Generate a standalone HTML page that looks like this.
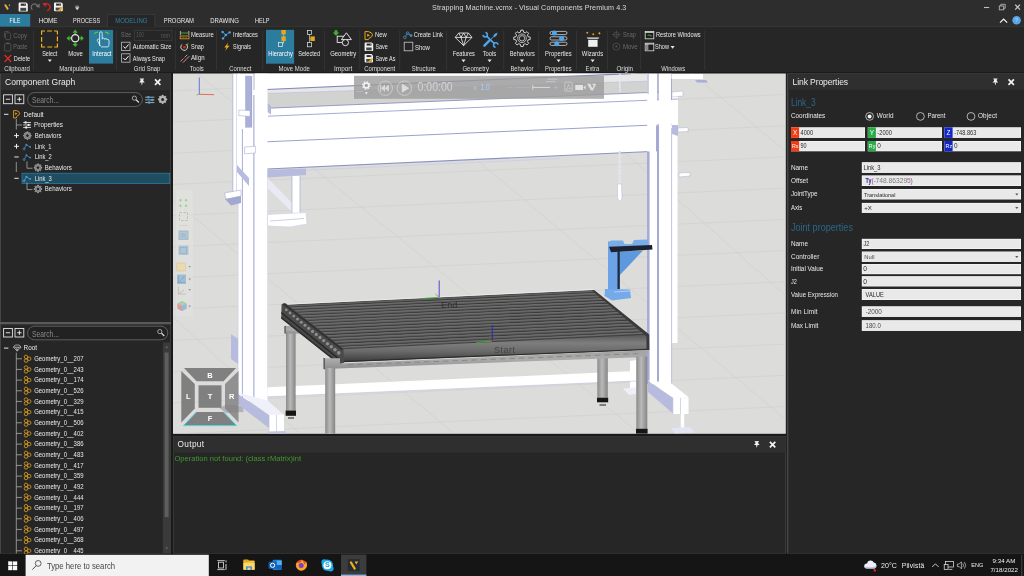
<!DOCTYPE html>
<html lang="en"><head><meta charset="utf-8"><title>Strapping Machine.vcmx - Visual Components Premium 4.3</title>
<style>
html,body{margin:0;padding:0;background:#262626;overflow:hidden;}
body{width:1024px;height:576px;position:relative;font-family:"Liberation Sans",sans-serif;}
#gfx{position:absolute;left:0;top:0;width:1024px;height:576px;display:block;}
#txt{position:absolute;left:0;top:0;width:1920px;height:1080px;transform-origin:0 0;transform:scale(0.533333);font-family:"Liberation Sans",sans-serif;}
.t{position:absolute;white-space:pre;line-height:20px;height:20px;font-size:12px;color:#e8e8e8;}
</style></head>
<body>
<svg id="gfx" viewBox="0 0 1024 576" width="1024" height="576">
<rect x="0" y="0" width="1024" height="576" fill="#1a1a1a" />
<rect x="0" y="0" width="1024" height="26.6" fill="#2d2d2d" />
<rect x="0" y="27.2" width="1024" height="44.8" fill="#262626" />
<rect x="0" y="26.4" width="1024" height="0.8" fill="#3e3e3e" />
<rect x="0" y="73.5" width="171" height="249.5" fill="#464646" />
<rect x="1" y="74" width="169.3" height="248.3" fill="#262626" />
<rect x="1" y="74" width="169.3" height="16" fill="#2f2f2f" />
<rect x="0" y="322" width="171" height="2" fill="#5a5a5a" />
<rect x="0" y="324" width="171" height="229.7" fill="#464646" />
<rect x="1" y="324.5" width="169.3" height="229.2" fill="#262626" />
<rect x="173" y="73.5" width="612.8" height="360.3" fill="#dcdcda" />
<rect x="173.2" y="436" width="612.8" height="117.7" fill="#464646" />
<rect x="173.8" y="436.6" width="611.6" height="117.1" fill="#262626" />
<rect x="173.8" y="436.6" width="611.6" height="15.9" fill="#2f2f2f" />
<rect x="786.8" y="73.3" width="237.2" height="480.4" fill="#464646" />
<rect x="788.4" y="74" width="235.6" height="479.7" fill="#262626" />
<rect x="788.4" y="74" width="235.6" height="15.8" fill="#2f2f2f" />
<rect x="0" y="553.1" width="171" height="0.6" fill="#464646" />
<rect x="173.2" y="553.1" width="612.8" height="0.6" fill="#464646" />
<rect x="786.8" y="553.1" width="237.2" height="0.6" fill="#464646" />
<rect x="0" y="553.7" width="1024" height="22.3" fill="#151515" />
<defs><clipPath id="vp"><rect x="173" y="73.5" width="612.8" height="360.3"/></clipPath><linearGradient id="leg" x1="0" x2="1" y1="0" y2="0"><stop offset="0" stop-color="#8a8a8a"/><stop offset="0.45" stop-color="#b9b9b9"/><stop offset="1" stop-color="#858585"/></linearGradient><linearGradient id="roll" x1="0" x2="0" y1="0" y2="1"><stop offset="0" stop-color="#545454"/><stop offset="0.32" stop-color="#7e7e7e"/><stop offset="0.62" stop-color="#6a6a6a"/><stop offset="1" stop-color="#3a3a3a"/></linearGradient><linearGradient id="rail" x1="0" x2="0" y1="0" y2="1"><stop offset="0" stop-color="#a2a2a2"/><stop offset="0.5" stop-color="#ababab"/><stop offset="1" stop-color="#8e8e8e"/></linearGradient></defs>
<g clip-path="url(#vp)">
<line x1="173" y1="90.8" x2="786" y2="63.3" stroke="#cececc" stroke-width="0.6" />
<line x1="173" y1="122" x2="786" y2="94.5" stroke="#cececc" stroke-width="0.6" />
<line x1="173" y1="153.2" x2="786" y2="125.7" stroke="#cececc" stroke-width="0.6" />
<line x1="173" y1="184.4" x2="786" y2="156.9" stroke="#cececc" stroke-width="0.6" />
<line x1="173" y1="215.6" x2="786" y2="188.1" stroke="#cececc" stroke-width="0.6" />
<line x1="173" y1="246.8" x2="786" y2="219.3" stroke="#cececc" stroke-width="0.6" />
<line x1="173" y1="278" x2="786" y2="250.5" stroke="#cececc" stroke-width="0.6" />
<line x1="173" y1="309.2" x2="786" y2="281.7" stroke="#cececc" stroke-width="0.6" />
<line x1="173" y1="340.4" x2="786" y2="312.9" stroke="#cececc" stroke-width="0.6" />
<line x1="173" y1="371.6" x2="786" y2="344.1" stroke="#cececc" stroke-width="0.6" />
<line x1="173" y1="402.8" x2="786" y2="375.3" stroke="#cececc" stroke-width="0.6" />
<line x1="173" y1="434" x2="786" y2="406.5" stroke="#cececc" stroke-width="0.6" />
<line x1="173" y1="465.2" x2="786" y2="437.7" stroke="#cececc" stroke-width="0.6" />
<line x1="173" y1="496.4" x2="786" y2="468.9" stroke="#cececc" stroke-width="0.6" />
<line x1="692" y1="73.5" x2="786" y2="151.7" stroke="#cececc" stroke-width="0.6" />
<line x1="536" y1="73.5" x2="786" y2="296" stroke="#cececc" stroke-width="0.6" />
<line x1="374" y1="73.5" x2="786" y2="419.5" stroke="#cececc" stroke-width="0.6" />
<line x1="197" y1="73.5" x2="640" y2="434" stroke="#cececc" stroke-width="0.6" />
<line x1="173" y1="200" x2="455" y2="434" stroke="#cececc" stroke-width="0.6" />
<line x1="173" y1="317" x2="300" y2="434" stroke="#cececc" stroke-width="0.6" />
<polygon points="255,73 640,73 631,73.5 255,90" fill="#ffffff" />
<polygon points="268,90 631,73.5 648,73.5 648,81.2 268,93.4" fill="#e7e7e7" />
<polygon points="268,93.4 648,81.2 648,92.6 268,108.2" fill="#d2d2d0" />
<line x1="255" y1="90" x2="631" y2="73.6" stroke="#838abb" stroke-width="1.1" />
<line x1="268" y1="93.4" x2="648" y2="81.2" stroke="#b9bdd8" stroke-width="0.6" />
<polygon points="255,108.6 268,108.2 660,92 678,92 678,125 656,126 656,151.2 267,169 255,169" fill="#ffffff" />
<line x1="268" y1="108.2" x2="660" y2="92" stroke="#8c93c2" stroke-width="0.9" />
<line x1="268" y1="116.2" x2="678" y2="99" stroke="#9aa1cc" stroke-width="0.9" />
<line x1="255" y1="142.3" x2="672" y2="124.2" stroke="#9aa1cc" stroke-width="1" />
<line x1="267" y1="169" x2="656" y2="151.2" stroke="#8c93c2" stroke-width="1.1" />
<line x1="300" y1="170.5" x2="560" y2="158.5" stroke="#c9cce6" stroke-width="0.7" />
<polygon points="267.4,103 271,106 271,114.5 267.4,112" fill="#b4b8da" />
<rect x="232.5" y="73.5" width="7.5" height="118.5" fill="#ffffff" />
<line x1="232.8" y1="73.5" x2="232.8" y2="192" stroke="#9aa1cc" stroke-width="0.7" />
<line x1="236.5" y1="73.5" x2="236.5" y2="192" stroke="#c3c6e2" stroke-width="0.6" />
<rect x="238" y="73.5" width="29.5" height="327.5" fill="#ffffff" />
<rect x="245.2" y="75.8" width="5.8" height="51.8" fill="#aab0d6" />
<line x1="254" y1="74" x2="254" y2="90" stroke="#9aa1cc" stroke-width="0.8" />
<line x1="253.9" y1="95" x2="253.9" y2="401" stroke="#9aa1cc" stroke-width="1" />
<line x1="242.4" y1="129" x2="242.4" y2="401" stroke="#a9aed4" stroke-width="1" />
<line x1="238.2" y1="190" x2="238.2" y2="395" stroke="#c9cce6" stroke-width="0.6" />
<line x1="267.4" y1="169" x2="267.4" y2="388" stroke="#d0d2ea" stroke-width="0.5" />
<polygon points="238.8,110 250,110.6 250,116.4 238.8,115.6" fill="#ffffff" stroke="#9aa1cc" stroke-width="0.5" />
<polygon points="244.6,147 255.4,146.2 255.4,153 244.6,153.8" fill="#ffffff" stroke="#9aa1cc" stroke-width="0.5" />
<line x1="251.6" y1="76" x2="251.6" y2="127.5" stroke="#8e94c4" stroke-width="0.9" />
<polygon points="237,165 249,178 249,186 237,172" fill="#b7bbde" />
<polygon points="224.5,193 241,190 241,196 226,199.5" fill="#ffffff" stroke="#9aa1cc" stroke-width="0.5" />
<polygon points="225,199 241,196 241,203 231,205.5" fill="#a3a8cf" />
<polygon points="231,334 238,339 238,364 231,359" fill="#b7bbde" />
<polygon points="267.5,170 306,168.5 306,175 267.5,177.5" fill="#b7bbde" />
<polygon points="267.5,178 292,203 292,212 267.5,188" fill="#e9eaf4" />
<rect x="292" y="176" width="8" height="38" fill="#ffffff" />
<line x1="292" y1="176" x2="292" y2="214" stroke="#9aa1cc" stroke-width="0.6" />
<line x1="300" y1="176" x2="300" y2="214" stroke="#9aa1cc" stroke-width="0.6" />
<polygon points="267.5,214.5 306,212.5 307,224 290,227 267.5,226" fill="#ffffff" stroke="#c6c9e4" stroke-width="0.5" />
<line x1="270" y1="221" x2="304" y2="218.5" stroke="#9aa1cc" stroke-width="0.5" />
<rect x="647.2" y="73.5" width="9.8" height="310.5" fill="#ffffff" />
<rect x="658.8" y="73.5" width="12.7" height="310.5" fill="#ffffff" />
<rect x="657" y="151" width="2" height="233" fill="#a4aad2" />
<rect x="656" y="125.4" width="3" height="26" fill="#a4aad2" />
<rect x="647" y="151.5" width="2.6" height="232.5" fill="#a6acd6" />
<line x1="648" y1="73.5" x2="648" y2="94" stroke="#9aa1cc" stroke-width="1" />
<line x1="658" y1="73.5" x2="658" y2="100" stroke="#9aa1cc" stroke-width="1.2" />
<rect x="671.5" y="126" width="6" height="217" fill="#ffffff" />
<line x1="671.6" y1="128" x2="671.6" y2="384" stroke="#b3b7dc" stroke-width="0.8" />
<line x1="671.5" y1="73.5" x2="671.5" y2="100" stroke="#9aa1cc" stroke-width="0.9" />
<polygon points="671.5,74 703,74 703,79 671.5,79" fill="#ffffff" />
<polygon points="695,80 706,80 708,82.5 697,82.5" fill="#a9aed4" />
<polygon points="672,92 683,91 683,96 672,97" fill="#ffffff" stroke="#9aa1cc" stroke-width="0.4" />
<polygon points="672,125 678,125 678,136 672,134" fill="#b7bbde" />
<polygon points="678,128 688,127.5 688,131.5 678,132" fill="#ffffff" stroke="#9aa1cc" stroke-width="0.4" />
<polygon points="679,173 690,172.5 690,176 679,177" fill="#ffffff" stroke="#9aa1cc" stroke-width="0.4" />
<line x1="619.6" y1="151" x2="619.6" y2="185" stroke="#eef0fa" stroke-width="1.6" />
<line x1="619.6" y1="151" x2="619.6" y2="185" stroke="#b5b9dc" stroke-width="0.5" stroke-dasharray="1.2 1.2"/>
<polygon points="617.5,184 621.5,184 622,199 619.5,201.5 617.5,198" fill="#ffffff" stroke="#b5b9dc" stroke-width="0.5" />
<line x1="619.8" y1="73.5" x2="619.8" y2="92" stroke="#eef0fa" stroke-width="1.4" />
<line x1="619.8" y1="73.5" x2="619.8" y2="92" stroke="#b5b9dc" stroke-width="0.5" stroke-dasharray="1.2 1.2"/>
<polygon points="648,380 671.5,383.5 689,397.5 673,398" fill="#ffffff" />
<polygon points="648,381 673,398 673,413.5 648,392" fill="#b7bbde" />
<rect x="673" y="397.5" width="15.5" height="16.5" fill="#ffffff" />
<line x1="680.5" y1="398" x2="680.5" y2="414" stroke="#c6c9e4" stroke-width="0.8" />
<line x1="673" y1="397.5" x2="673" y2="414" stroke="#c6c9e4" stroke-width="0.6" />
<rect x="680.8" y="414" width="3.4" height="14" fill="#ffffff" />
<polygon points="671,428 690,427 695,432.5 675,433.5" fill="#e4e5f2" />
<polygon points="630,361 636,360 636,393 630,393" fill="#ffffff" />
<polygon points="623,388.5 636,387.5 636,394 629,395" fill="#eeeff8" />
<polygon points="219.5,408 226,404.5 243,406 243.5,412 226,413" fill="#8f8f9c" fill-opacity="0.55"/>
<polygon points="238,392.6 267.5,400.6 284,415 269.4,415.6" fill="#f0f0fa" />
<polygon points="238,394 269.5,415.4 269.5,428.6 238,404.2" fill="#b7bbde" />
<rect x="269.5" y="414.8" width="14.5" height="17.7" fill="#ffffff" />
<line x1="276.5" y1="415" x2="276.5" y2="432" stroke="#c6c9e4" stroke-width="0.8" />
<polygon points="268,431.5 285,431 287,433.8 268,433.8" fill="#c3c6e2" />
<polygon points="267.5,387.3 636,371 636,381 267.5,396.8" fill="#ffffff" />
<line x1="267.5" y1="396.8" x2="636" y2="381" stroke="#c2c5e3" stroke-width="0.7" />
<rect x="286" y="328" width="9.6" height="82.5" fill="url(#leg)" />
<rect x="285.6" y="410.5" width="10.4" height="5.3" fill="#161616" />
<rect x="288" y="417" width="6" height="2" fill="#7d7d7d" />
<rect x="597.3" y="355" width="10.5" height="42.7" fill="url(#leg)" />
<rect x="597" y="397.7" width="11.2" height="4.6" fill="#161616" />
<rect x="599.5" y="404" width="6.5" height="2" fill="#7d7d7d" />
<polygon points="284.5,326 300,326 309,333.5 285,333.5" fill="url(#rail)" />
<rect x="284.3" y="326" width="1.7" height="7.5" fill="#6a6a6a" />
<polygon points="285,305.2 593,290.4 648,335 341,349.8" fill="#656565" />
<polygon points="287.059,306.452 594.544,291.652 595.911,292.76 288.437,307.56" fill="#545454" />
<polygon points="287.818,307.063 595.298,292.263 595.911,292.76 288.437,307.56" fill="#343434" />
<polygon points="285.81,305.449 593.308,290.649 593.812,291.059 286.32,305.859" fill="#737373" />
<polygon points="290.174,308.956 597.632,294.156 599.069,295.321 291.624,310.121" fill="#545454" />
<polygon points="290.977,309.601 598.427,294.801 599.069,295.321 291.624,310.121" fill="#343434" />
<polygon points="288.812,307.862 596.282,293.062 596.844,293.517 289.379,308.317" fill="#737373" />
<polygon points="293.422,311.566 600.851,296.766 602.327,297.963 294.912,312.763" fill="#545454" />
<polygon points="294.248,312.23 601.669,297.43 602.327,297.963 294.912,312.763" fill="#343434" />
<polygon points="292.014,310.435 599.455,295.635 600.038,296.107 292.602,310.907" fill="#737373" />
<polygon points="296.75,314.241 604.149,299.441 605.653,300.66 298.268,315.46" fill="#545454" />
<polygon points="297.592,314.917 604.983,300.117 605.653,300.66 298.268,315.46" fill="#343434" />
<polygon points="295.311,313.084 602.723,298.284 603.319,298.767 295.912,313.567" fill="#737373" />
<polygon points="300.136,316.961 607.504,302.161 609.029,303.398 301.675,318.198" fill="#545454" />
<polygon points="300.99,317.648 608.35,302.848 609.029,303.398 301.675,318.198" fill="#343434" />
<polygon points="298.674,315.787 606.055,300.987 606.661,301.478 299.285,316.278" fill="#737373" />
<polygon points="303.567,319.718 610.904,304.918 612.446,306.169 305.123,320.969" fill="#545454" />
<polygon points="304.43,320.413 611.76,305.613 612.446,306.169 305.123,320.969" fill="#343434" />
<polygon points="302.086,318.529 609.437,303.729 610.05,304.226 302.705,319.026" fill="#737373" />
<polygon points="307.035,322.505 614.341,307.705 615.898,308.968 308.606,323.768" fill="#545454" />
<polygon points="307.907,323.206 615.205,308.406 615.898,308.968 308.606,323.768" fill="#343434" />
<polygon points="305.539,321.304 612.859,306.504 613.478,307.006 306.165,321.806" fill="#737373" />
<polygon points="310.535,325.318 617.81,310.518 619.38,311.792 312.12,326.592" fill="#545454" />
<polygon points="311.415,326.025 618.681,311.225 619.38,311.792 312.12,326.592" fill="#343434" />
<polygon points="309.026,324.106 616.314,309.306 616.94,309.813 309.657,324.613" fill="#737373" />
<polygon points="314.063,328.154 621.306,313.354 622.888,314.636 315.659,329.436" fill="#545454" />
<polygon points="314.949,328.866 622.184,314.066 622.888,314.636 315.659,329.436" fill="#343434" />
<polygon points="312.543,326.932 619.799,312.132 620.43,312.643 313.179,327.443" fill="#737373" />
<polygon points="317.617,331.009 624.827,316.209 626.419,317.5 319.223,332.3" fill="#545454" />
<polygon points="318.508,331.726 625.711,316.926 626.419,317.5 319.223,332.3" fill="#343434" />
<polygon points="316.086,329.779 623.31,314.979 623.945,315.493 316.726,330.293" fill="#737373" />
<polygon points="321.192,333.882 628.371,319.082 629.972,320.381 322.808,335.181" fill="#545454" />
<polygon points="322.089,334.603 629.26,319.803 629.972,320.381 322.808,335.181" fill="#343434" />
<polygon points="319.652,332.645 626.844,317.845 627.483,318.362 320.296,333.162" fill="#737373" />
<polygon points="324.788,336.772 631.934,321.972 633.544,323.278 326.413,338.078" fill="#545454" />
<polygon points="325.69,337.497 632.828,322.697 633.544,323.278 326.413,338.078" fill="#343434" />
<polygon points="323.24,335.528 630.4,320.728 631.042,321.248 323.887,336.048" fill="#737373" />
<polygon points="328.403,339.677 635.517,324.877 637.134,326.189 330.035,340.989" fill="#545454" />
<polygon points="329.31,340.405 636.415,325.605 637.134,326.189 330.035,340.989" fill="#343434" />
<polygon points="326.846,338.426 633.974,323.626 634.619,324.149 327.498,338.949" fill="#737373" />
<polygon points="332.035,342.596 639.116,327.796 640.741,329.114 333.675,343.914" fill="#545454" />
<polygon points="332.946,343.328 640.018,328.528 640.741,329.114 333.675,343.914" fill="#343434" />
<polygon points="330.471,341.339 637.566,326.539 638.215,327.065 331.126,341.865" fill="#737373" />
<polygon points="335.683,345.528 642.731,330.728 644.363,332.051 337.33,346.851" fill="#545454" />
<polygon points="336.598,346.262 643.638,331.462 644.363,332.051 337.33,346.851" fill="#343434" />
<polygon points="334.113,344.265 641.175,329.465 641.826,329.993 334.77,344.793" fill="#737373" />
<polygon points="339.347,348.471 646.362,333.671 648,335 341,349.8" fill="#545454" />
<polygon points="340.265,349.209 647.272,334.409 648,335 341,349.8" fill="#343434" />
<polygon points="337.77,347.204 644.799,332.404 645.453,332.934 338.43,347.734" fill="#737373" />
<line x1="285" y1="305.2" x2="593" y2="290.4" stroke="#3a3a3a" stroke-width="0.9" />
<line x1="286" y1="304.3" x2="593" y2="289.6" stroke="#f2f2f2" stroke-width="0.8" />
<polygon points="341,348.6 648,334 648.5,349.8 343,362" fill="url(#roll)" />
<line x1="341" y1="348.8" x2="648" y2="334.2" stroke="#3c3c3c" stroke-width="0.9" />
<line x1="343" y1="361.6" x2="648.5" y2="349.4" stroke="#2c2c2c" stroke-width="1.2" />
<polygon points="591.8,290.4 594.2,289.9 649.2,334.6 649.4,350 646.6,350 646.4,336.2" fill="#3a3a3a" />
<polygon points="281.6,304 285.6,303.2 343.4,348.4 344,362.8 339,364.6 281.2,318.6" fill="#4a4a4a" />
<line x1="283.4" y1="303.6" x2="342.4" y2="349.6" stroke="#2f2f2f" stroke-width="1.6" />
<polygon points="281.3,311.8 339.3,358.2 339.3,360.2 281.3,313.8" fill="#2a2a2a" />
<polygon points="281.2,316.6 339,362.8 339,364.6 281.2,318.6" fill="#2d2d2d" />
<circle cx="286.273" cy="309.933" r="1.36667" fill="#8e8e8e" />
<circle cx="290.02" cy="313" r="1.4" fill="#8e8e8e" />
<circle cx="293.767" cy="316.067" r="1.43333" fill="#8e8e8e" />
<circle cx="297.513" cy="319.133" r="1.46667" fill="#8e8e8e" />
<circle cx="301.26" cy="322.2" r="1.5" fill="#8e8e8e" />
<circle cx="305.007" cy="325.267" r="1.53333" fill="#8e8e8e" />
<circle cx="308.753" cy="328.333" r="1.56667" fill="#8e8e8e" />
<circle cx="312.5" cy="331.4" r="1.6" fill="#8e8e8e" />
<circle cx="316.247" cy="334.467" r="1.63333" fill="#8e8e8e" />
<circle cx="319.993" cy="337.533" r="1.66667" fill="#8e8e8e" />
<circle cx="323.74" cy="340.6" r="1.7" fill="#8e8e8e" />
<circle cx="327.487" cy="343.667" r="1.73333" fill="#8e8e8e" />
<circle cx="331.233" cy="346.733" r="1.76667" fill="#8e8e8e" />
<circle cx="334.98" cy="349.8" r="1.8" fill="#8e8e8e" />
<circle cx="338.727" cy="352.867" r="1.83333" fill="#8e8e8e" />
<polygon points="323.8,358.2 340,358.2 340,363.6 647.5,350.2 647.5,356.9 324.4,369" fill="url(#rail)" />
<polygon points="323.4,358 325,358 325,369.2 323.4,369.2" fill="#5e5e5e" />
<line x1="348" y1="364.9" x2="640" y2="353.6" stroke="#868686" stroke-width="0.9" stroke-dasharray="5.5 4"/>
<rect x="325.2" y="368" width="10" height="66" fill="url(#leg)" />
<rect x="636.3" y="356.5" width="11" height="72.5" fill="url(#leg)" />
<rect x="636" y="428.8" width="11.6" height="5" fill="#161616" />
<polygon points="608,241.5 619.5,241.5 619.5,292 608,292" fill="#6ba3e6" />
<polygon points="608.5,243 611,240.5 623,240.5 624.5,244 632,244 634,240 647.5,239.5 649,246 608.5,248" fill="#78adea" />
<polygon points="619.5,251.5 643,250.5 619.5,275.5" fill="#5e98dd" />
<polygon points="609,246.8 652,245 652.5,249.6 611,252.2" fill="#1c2230" />
<rect x="617.5" y="251" width="2.3" height="38" fill="#1f2a40" />
<polygon points="605,289 630,289.5 631,298 612,300.5 604.5,296" fill="#74aaea" />
<line x1="614" y1="292" x2="630" y2="291" stroke="#c9defa" stroke-width="0.7" />
<line x1="199.3" y1="77.5" x2="199.3" y2="94" stroke="#4f6fd6" stroke-width="0.9" />
<line x1="199" y1="94.3" x2="214" y2="94.7" stroke="#e0604c" stroke-width="0.9" />
<line x1="196.5" y1="95" x2="199.3" y2="94.2" stroke="#50c050" stroke-width="0.8" />
<line x1="439.2" y1="280.5" x2="439.2" y2="297" stroke="#3b3bd0" stroke-width="0.9" />
<line x1="439" y1="297.3" x2="423" y2="298.4" stroke="#38c038" stroke-width="0.9" />
<line x1="439" y1="297" x2="435.4" y2="294" stroke="#e05050" stroke-width="0.7" />
<line x1="492.3" y1="325" x2="492.3" y2="340.5" stroke="#2a2ab8" stroke-width="1" />
<line x1="492" y1="341.2" x2="476" y2="342.4" stroke="#2fb82f" stroke-width="1" />
<line x1="492" y1="341" x2="489" y2="339.5" stroke="#e03030" stroke-width="0.9" />
<polygon points="184,368 236,368 223.5,381.3 196.5,381.3" fill="#808080" />
<polygon points="181.3,371 194.8,384 194.8,408.5 181.3,422.5" fill="#808080" />
<rect x="198.5" y="385.3" width="23" height="22.5" fill="#808080" />
<polygon points="238.5,371 225,384 225,408.5 238.5,422.5" fill="#808080" fill-opacity="0.82"/>
<polygon points="196.5,412 223.5,412 236,425.2 184,425.2" fill="#808080" />
<path d="M196.2 412.2 L183.5 425.6 L236.5 425.6 L224 412.4" fill="none" stroke="#3fd2e0" stroke-width="0.9" />
<g opacity="0.78">
<rect x="176" y="190" width="17" height="126" fill="#e2e2e0" fill-opacity="0.7"/>
<path d="M179.2 200.2 h2.6 M180.5 198.9 v2.6" fill="none" stroke="#73c873" stroke-width="0.8" />
<path d="M187.4 200.2 h-2.6 M186.1 198.9 v2.6" fill="none" stroke="#73c873" stroke-width="0.8" />
<path d="M179.2 205.8 h2.6 M180.5 207.1 v-2.6" fill="none" stroke="#73c873" stroke-width="0.8" />
<path d="M187.4 205.8 h-2.6 M186.1 207.1 v-2.6" fill="none" stroke="#73c873" stroke-width="0.8" />
<rect x="179.5" y="212.5" width="8" height="8" fill="none" stroke="#a8a8a8" stroke-width="0.8" stroke-dasharray="2.4 1.6"/>
<line x1="179" y1="225.5" x2="188" y2="225.5" stroke="#c8c8c8" stroke-width="0.6" />
<rect x="178.5" y="230.5" width="10" height="9.5" fill="#8fb6d6" />
<rect x="180.2" y="232.3" width="6.6" height="5.9" fill="none" stroke="#d9c7a0" stroke-width="0.8" rx="1.5"/>
<rect x="178.5" y="245.5" width="10" height="9.5" fill="#a3c0d8" />
<rect x="180" y="247.5" width="6.5" height="6" fill="none" stroke="#7f9fb8" stroke-width="0.7"/>
<rect x="176.8" y="263" width="8.7" height="8" fill="#f0d9a4" stroke="#d8b878" stroke-width="0.5"/>
<rect x="177" y="274.5" width="9" height="9.5" fill="#8fb6d6" />
<path d="M178.5 282.5 L184.5 276.5 M178.5 276 v6.5 h6.5" fill="none" stroke="#6f8fa8" stroke-width="0.7" />
<path d="M178.3 286.5 v7.5 h7.5" fill="none" stroke="#90b890" stroke-width="0.7" />
<line x1="178.3" y1="294" x2="184" y2="290" stroke="#e09090" stroke-width="0.7" />
<polygon points="177.5,303.5 182,301 186.5,303.5 186.5,308.5 182,311 177.5,308.5" fill="#b0a8a8" />
<polygon points="177.5,303.5 182,306 182,311 177.5,308.5" fill="#e08a8a" />
<polygon points="186.5,303.5 182,306 182,311 186.5,308.5" fill="#8ab0e0" />
<polygon points="177.5,303.5 182,301 186.5,303.5 182,306" fill="#9ad09a" />
<polygon points="188.3,265.9 191,265.9 189.65,267.8" fill="#8a8a8a" />
<polygon points="188.3,278.6 191,278.6 189.65,280.5" fill="#8a8a8a" />
<polygon points="188.3,289.1 191,289.1 189.65,291" fill="#8a8a8a" />
<polygon points="188.3,305.6 191,305.6 189.65,307.5" fill="#8a8a8a" />
</g>
<rect x="354" y="75.8" width="250" height="23" fill="#9c9c9c" fill-opacity="0.8"/>
<circle cx="385.3" cy="88.2" r="7.2" fill="none" stroke="#d2d2d2" stroke-width="0.8" />
<circle cx="404.4" cy="88.2" r="7.2" fill="none" stroke="#d2d2d2" stroke-width="0.8" />
<polygon points="401.8,83.6 401.8,92.8 409.2,88.2" fill="#dcdcdc" />
<polygon points="381.2,88.2 385,84.6 385,91.8" fill="#dcdcdc" />
<polygon points="385,88.2 388.8,84.6 388.8,91.8" fill="#dcdcdc" />
<rect x="380.2" y="84.6" width="1" height="7.2" fill="#dcdcdc" />
<circle cx="366.3" cy="85.5" r="2.5" fill="none" stroke="#f4f4f4" stroke-width="1.5" />
<circle cx="366.3" cy="85.5" r="3.7" fill="none" stroke="#f4f4f4" stroke-width="1.2" stroke-dasharray="1.45 1.45"/>
<polygon points="364.8,92.3 367.8,92.3 366.3,94.4" fill="#ececec" />
<line x1="356" y1="91.6" x2="363" y2="91.6" stroke="#c4c4c4" stroke-width="0.6" />
<line x1="507.5" y1="87.4" x2="512.5" y2="87.4" stroke="#9fbad8" stroke-width="0.7" />
<line x1="516" y1="87.4" x2="531" y2="87.4" stroke="#b4c6dc" stroke-width="0.7" stroke-dasharray="0.8 0.8"/>
<line x1="532.6" y1="87.4" x2="550" y2="87.4" stroke="#e0e0e0" stroke-width="0.9" />
<line x1="532.8" y1="84.8" x2="532.8" y2="90" stroke="#e0e0e0" stroke-width="0.9" />
<path d="M554 87.4 h4 M556 85.4 v4" fill="none" stroke="#a8c0dc" stroke-width="0.7" />
<rect x="547.5" y="78.6" width="10" height="1.2" fill="#c2c2c2" />
<rect x="546" y="81" width="9.5" height="1.2" fill="#c2c2c2" />
<rect x="564.8" y="82.2" width="7.4" height="9" fill="none" stroke="#d6d6d6" stroke-width="0.7" rx="0.8"/>
<path d="M566.2 89.6 q2.2 -2.6 2.2 -5.6 q0.6 3.4 3 4.6 q-3 -0.2 -5.2 1" fill="none" stroke="#d6d6d6" stroke-width="0.55" />
<rect x="575.2" y="85" width="7.8" height="5" fill="#e2e2e2" rx="0.6"/>
<polygon points="583.4,87.5 585.6,85.6 585.6,89.4" fill="#e2e2e2" />
<path d="M587 83.8 h3.4 l1.9 4.6 l1.5 -3.4 h-1.4 v-1.2 h3.8 l-3.2 6.8 h-1.9 z" fill="#dedede" />
</g>
<rect x="3" y="3" width="9" height="8" fill="#222f42" />
<line x1="5.4" y1="5.2" x2="7.6" y2="8.6" stroke="#f4ac14" stroke-width="2" stroke-linecap="round"/>
<circle cx="9.4" cy="5.3" r="0.8" fill="#f4ac14" />
<path d="M19.52 2.4 h6.74667 l1.53333 1.53333 v6.74667 q0 0.92 -0.92 0.92 h-7.36 q-0.92 0 -0.92 -0.92 v-7.36 q0 -0.92 0.92 -0.92 z" fill="#f2f2f2" />
<rect x="20.7467" y="3.62667" width="5.21333" height="2.14667" fill="#2d2d2d" />
<rect x="24.3244" y="3.62667" width="0.92" height="1.43111" fill="#9a9a9a" />
<rect x="20.3378" y="7.81778" width="5.82667" height="3.06667" fill="#454545" />
<path d="M32.4 9.8 a3.3 3.3 0 1 1 5.4 -2.6" fill="none" stroke="#707070" stroke-width="1.2" />
<polygon points="35.6,6.6 39.6,3.6 39.6,7.8" fill="#707070" />
<path d="M44.6 4.6 q3.6 -1.8 5.2 1.2 q1.2 3 -2.6 5" fill="none" stroke="#d42424" stroke-width="1.3" />
<polygon points="42.2,3.6 46.6,2.4 45.6,6.9" fill="#d42424" />
<path d="M54.88 2.4 h6.45333 l1.46667 1.46667 v6.45333 q0 0.88 -0.88 0.88 h-7.04 q-0.88 0 -0.88 -0.88 v-7.04 q0 -0.88 0.88 -0.88 z" fill="#f2f2f2" />
<rect x="56.0533" y="3.57333" width="4.98667" height="2.05333" fill="#2d2d2d" />
<rect x="59.4756" y="3.57333" width="0.88" height="1.36889" fill="#9a9a9a" />
<rect x="55.6622" y="7.58222" width="5.57333" height="2.93333" fill="#454545" />
<line x1="58.4978" y1="10.8089" x2="62.4089" y2="7.09333" stroke="#f0a818" stroke-width="1.76" />
<line x1="75.4" y1="6.2" x2="79" y2="6.2" stroke="#d8d8d8" stroke-width="0.7" />
<polygon points="74.9725,7.2635 79.4275,7.2635 77.2,10.2335" fill="#d8d8d8" />
<line x1="984" y1="7.5" x2="989.2" y2="7.5" stroke="#c0c0c0" stroke-width="1.1" />
<rect x="999.3" y="6" width="4.4" height="3.8" fill="none" stroke="#b4b4b4" stroke-width="0.9"/>
<path d="M1000.8 6 v-1.7 h4.4 v4 h-1.5" fill="none" stroke="#b4b4b4" stroke-width="0.9" />
<path d="M1015.2 4.6 l4.8 5 M1020 4.6 l-4.8 5" fill="none" stroke="#c6c6c6" stroke-width="1.3" />
<path d="M1000 22.6 l3.6 -3.6 l3.6 3.6" fill="none" stroke="#f4f4f4" stroke-width="1.2" />
<circle cx="1016.6" cy="20.3" r="4.3" fill="#58a6e8" />
<rect x="0" y="14" width="30.2" height="12.6" fill="#2c7c9e" />
<rect x="107.2" y="14.2" width="48" height="13.2" fill="#3e3e3e" />
<rect x="107.9" y="14.9" width="46.6" height="12.5" fill="#262626" />
<line x1="33.5" y1="30.6" x2="33.5" y2="70" stroke="#3d3d3d" stroke-width="0.6" />
<line x1="116.5" y1="30.6" x2="116.5" y2="70" stroke="#3d3d3d" stroke-width="0.6" />
<line x1="175.6" y1="30.6" x2="175.6" y2="70" stroke="#3d3d3d" stroke-width="0.6" />
<line x1="216.5" y1="30.6" x2="216.5" y2="70" stroke="#3d3d3d" stroke-width="0.6" />
<line x1="262.75" y1="30.6" x2="262.75" y2="70" stroke="#3d3d3d" stroke-width="0.6" />
<line x1="324.4" y1="30.6" x2="324.4" y2="70" stroke="#3d3d3d" stroke-width="0.6" />
<line x1="359.75" y1="30.6" x2="359.75" y2="70" stroke="#3d3d3d" stroke-width="0.6" />
<line x1="399.75" y1="30.6" x2="399.75" y2="70" stroke="#3d3d3d" stroke-width="0.6" />
<line x1="446.5" y1="30.6" x2="446.5" y2="70" stroke="#3d3d3d" stroke-width="0.6" />
<line x1="503.75" y1="30.6" x2="503.75" y2="70" stroke="#3d3d3d" stroke-width="0.6" />
<line x1="538.75" y1="30.6" x2="538.75" y2="70" stroke="#3d3d3d" stroke-width="0.6" />
<line x1="576.5" y1="30.6" x2="576.5" y2="70" stroke="#3d3d3d" stroke-width="0.6" />
<line x1="607.5" y1="30.6" x2="607.5" y2="70" stroke="#3d3d3d" stroke-width="0.6" />
<line x1="640.6" y1="30.6" x2="640.6" y2="70" stroke="#3d3d3d" stroke-width="0.6" />
<line x1="704.75" y1="30.6" x2="704.75" y2="70" stroke="#3d3d3d" stroke-width="0.6" />
<rect x="5.6" y="32.8" width="5" height="6.8" fill="none" stroke="#5c5c5c" stroke-width="0.7" rx="1"/>
<path d="M4.4 37.6 v-5 q0 -1.2 1.2 -1.2 h3" fill="none" stroke="#5c5c5c" stroke-width="0.7" />
<rect x="4.6" y="43.6" width="6.2" height="7.4" fill="none" stroke="#5c5c5c" stroke-width="0.7" rx="0.8"/>
<rect x="6.4" y="42.6" width="2.6" height="1.6" fill="#5c5c5c" />
<path d="M4.6 55 l6.6 7 M11.2 55 l-6.6 7" fill="none" stroke="#da2a2a" stroke-width="1.3" />
<rect x="41.6" y="31" width="15.8" height="16" fill="none" stroke="#f0b21c" stroke-width="1.2" stroke-dasharray="3.4 2.1 4.8 2.1 3.4 0"/>
<polygon points="47.775,59.385 51.825,59.385 49.8,62.085" fill="#e8e8e8" />
<circle cx="75.2" cy="38.3" r="3.6" fill="none" stroke="#ececec" stroke-width="1.2" />
<line x1="75.2" y1="34.1" x2="75.2" y2="32.7" stroke="#3fb52f" stroke-width="1.9" />
<polygon points="75.2,29.6 77.9,32.7 72.5,32.7" fill="#3fb52f" />
<line x1="75.2" y1="42.5" x2="75.2" y2="43.9" stroke="#3fb52f" stroke-width="1.9" />
<polygon points="75.2,47 72.5,43.9 77.9,43.9" fill="#3fb52f" />
<line x1="71" y1="38.3" x2="69.6" y2="38.3" stroke="#3fb52f" stroke-width="1.9" />
<polygon points="66.5,38.3 69.6,35.6 69.6,41" fill="#3fb52f" />
<line x1="79.4" y1="38.3" x2="80.8" y2="38.3" stroke="#3fb52f" stroke-width="1.9" />
<polygon points="83.9,38.3 80.8,41 80.8,35.6" fill="#3fb52f" />
<rect x="89" y="29.9" width="24.1" height="33.7" fill="#2c7c9e" />
<path d="M99.6 45.6 v-12.4 q0 -1.5 1.3 -1.5 q1.3 0 1.3 1.5 v6 q0.2 -1.2 1.3 -1.1 q1.1 0.1 1.2 1.3 q0.3 -1 1.3 -0.9 q1.1 0.1 1.1 1.4 q0.4 -0.7 1.1 -0.5 q0.9 0.3 0.8 1.5 v3.2 q0 1.6 -0.9 2.8 h-6.6 q-1.2 -0.8 -2.5 -3.2 q-1.3 -2.4 -1.7 -3.2 q-0.3 -1 0.6 -1.4 q0.9 -0.3 1.6 0.6 z" fill="none" stroke="#eef6fa" stroke-width="0.8" stroke-linejoin="round"/>
<path d="M94.4 33.8 q1.6 -1.7 3.6 -1.6" fill="none" stroke="#4fd03a" stroke-width="1.3" />
<path d="M108.8 34 q-1.5 -1.8 -3.7 -1.8" fill="none" stroke="#4fd03a" stroke-width="1.3" />
<rect x="134.2" y="30.2" width="37.8" height="10.1" fill="none" stroke="#444444" stroke-width="0.6"/>
<rect x="121.6" y="42.2" width="8.4" height="8.4" fill="none" stroke="#bdbdbd" stroke-width="0.8"/>
<path d="M123.4 46.4 l1.9 2 l3.2 -3.9" fill="none" stroke="#f4f4f4" stroke-width="1" />
<rect x="121.6" y="53.8" width="8.4" height="8.4" fill="none" stroke="#bdbdbd" stroke-width="0.8"/>
<path d="M123.4 58 l1.9 2 l3.2 -3.9" fill="none" stroke="#f4f4f4" stroke-width="1" />
<rect x="180.2" y="36" width="8.8" height="2.8" fill="none" stroke="#e0a020" stroke-width="0.8"/>
<line x1="180.4" y1="31" x2="180.4" y2="35" stroke="#e8e8e8" stroke-width="0.7" />
<line x1="188.8" y1="31" x2="188.8" y2="35" stroke="#e8e8e8" stroke-width="0.7" />
<line x1="181" y1="33" x2="188.2" y2="33" stroke="#4bbf3a" stroke-width="0.8" />
<line x1="182" y1="37.4" x2="187.4" y2="37.4" stroke="#e0a020" stroke-width="0.5" stroke-dasharray="0.7 0.7"/>
<circle cx="184.2" cy="47" r="3.4" fill="none" stroke="#e0e0e0" stroke-width="0.8" stroke-dasharray="17 4.4" transform="rotate(-60 184.2 47)"/>
<circle cx="184.4" cy="47.2" r="1.4" fill="#d62020" />
<polygon points="185.6,45.4 188.8,42.6 187.4,45.8" fill="#4bbf3a" />
<line x1="180.6" y1="61.4" x2="187.2" y2="54.8" stroke="#d8d8d8" stroke-width="0.7" />
<line x1="183" y1="62.6" x2="189.4" y2="56.2" stroke="#d8d8d8" stroke-width="0.7" />
<line x1="182.8" y1="59.2" x2="185" y2="57" stroke="#d62a2a" stroke-width="1" />
<line x1="185" y1="60.6" x2="187.2" y2="58.4" stroke="#d62a2a" stroke-width="1" />
<path d="M222.6 32 l3.2 3 l3.6 -2.6 M225.8 35 l-2.6 3.2" fill="none" stroke="#4ba6ee" stroke-width="0.8" />
<circle cx="222.6" cy="32" r="1.2" fill="#4ba6ee" />
<circle cx="229.6" cy="32.4" r="1.2" fill="#4ba6ee" />
<circle cx="225.8" cy="35" r="1.3" fill="#4ba6ee" />
<circle cx="223" cy="38.4" r="1.2" fill="#4ba6ee" />
<polygon points="228.2,42.6 224.4,47.4 226.6,47.4 225,51 229.6,45.8 227.2,45.8" fill="#f0a81c" />
<rect x="266" y="29.8" width="28.1" height="33.9" fill="#2c7c9e" />
<rect x="281.4" y="30" width="4.4" height="4.4" fill="#e6a81c" />
<rect x="281.4" y="36.4" width="4.4" height="4.6" fill="#e6a81c" />
<line x1="283.6" y1="34.4" x2="283.6" y2="36.4" stroke="#e8e8e8" stroke-width="0.6" />
<rect x="278.6" y="42.4" width="4" height="4" fill="none" stroke="#e8f2f6" stroke-width="0.7"/>
<path d="M283.6 41 v2.2 h-1" fill="none" stroke="#e8e8e8" stroke-width="0.6" />
<rect x="307.4" y="30.4" width="4.2" height="4.2" fill="none" stroke="#e8e8e8" stroke-width="0.7"/>
<rect x="310.4" y="36.4" width="4.4" height="4.6" fill="#e6a81c" />
<rect x="307.4" y="42.6" width="4.2" height="4.2" fill="none" stroke="#e8e8e8" stroke-width="0.7"/>
<path d="M309.5 34.6 v8 M309.5 38.7 h1" fill="none" stroke="#e8e8e8" stroke-width="0.6" />
<polygon points="334.6,30.2 337.4,30.2 337.4,32.6 339.2,32.6 336,35.8 332.8,32.6 334.6,32.6" fill="#3fb52f" />
<rect x="337.2" y="36.2" width="6.4" height="6.2" fill="#262626" stroke="#f0f0f0" stroke-width="0.9"/>
<polygon points="346.4,32.8 351.4,39.6 341.4,39.6" fill="#262626" stroke="#f0f0f0" stroke-width="0.9" />
<circle cx="345.4" cy="42.6" r="3.1" fill="#262626" stroke="#f0f0f0" stroke-width="0.9" />
<path d="M365 31.6 h3.4 q4 1 4.2 3.2 q0 1.8 -3.6 3.6 l-0.6 1.2 h-3.4 z" fill="none" stroke="#e6a81c" stroke-width="1" stroke-linejoin="round"/>
<path d="M367.2 33.8 l2.8 1.4 l-2.8 1.6 z" fill="#e6a81c" />
<path d="M365.46 42.4 h6.30667 l1.43333 1.43333 v6.30667 q0 0.86 -0.86 0.86 h-6.88 q-0.86 0 -0.86 -0.86 v-6.88 q0 -0.86 0.86 -0.86 z" fill="#f2f2f2" />
<rect x="366.607" y="43.5467" width="4.87333" height="2.00667" fill="#262626" />
<rect x="369.951" y="43.5467" width="0.86" height="1.33778" fill="#9a9a9a" />
<rect x="366.224" y="47.4644" width="5.44667" height="2.86667" fill="#454545" />
<path d="M365.44 54 h6.16 l1.4 1.4 v6.16 q0 0.84 -0.84 0.84 h-6.72 q-0.84 0 -0.84 -0.84 v-6.72 q0 -0.84 0.84 -0.84 z" fill="#f2f2f2" />
<rect x="366.56" y="55.12" width="4.76" height="1.96" fill="#262626" />
<rect x="369.827" y="55.12" width="0.84" height="1.30667" fill="#9a9a9a" />
<rect x="366.187" y="58.9467" width="5.32" height="2.8" fill="#454545" />
<line x1="368.893" y1="62.0267" x2="372.627" y2="58.48" stroke="#f0a818" stroke-width="1.68" />
<path d="M405 37.2 l2.6 -3.8 l3.4 2" fill="none" stroke="#4a8dc0" stroke-width="0.8" />
<circle cx="404.8" cy="37.4" r="1.4" fill="none" stroke="#4a8dc0" stroke-width="0.8" />
<circle cx="407.6" cy="33.2" r="1.4" fill="none" stroke="#4a8dc0" stroke-width="0.8" />
<circle cx="411" cy="35.6" r="1.4" fill="#4a8dc0" />
<rect x="404.2" y="42.2" width="8.6" height="8.6" fill="none" stroke="#c8c8c8" stroke-width="0.8"/>
<path d="M455.2 37.4 l3.6 -4.4 h9.6 l3.6 4.4 l-8.4 8.2 z M455.2 37.4 h16.8 M458.8 33 l2.2 4.4 l2.6 8.2 l2.6 -8.2 l2.2 -4.4 M461 37.4 l2.6 -4.4 l2.6 4.4" fill="none" stroke="#f2f2f2" stroke-width="0.8" stroke-linejoin="round"/>
<polygon points="461.475,59.585 465.525,59.585 463.5,62.285" fill="#e8e8e8" />
<line x1="486.4" y1="35.9" x2="494.6" y2="43.8" stroke="#4ba6ee" stroke-width="1.7" />
<path d="M485.39 32.51 A2.2 2.2 0 1 1 483.01 34.89" fill="none" stroke="#4ba6ee" stroke-width="1.5" />
<path d="M495.61 47.19 A2.2 2.2 0 1 1 497.99 44.81" fill="none" stroke="#4ba6ee" stroke-width="1.5" />
<polygon points="497.6,32.6 496.6,35.6 494.6,37.2 493.2,35.8 494.8,33.8" fill="#4ba6ee" />
<line x1="494.2" y1="36.2" x2="489.6" y2="40.6" stroke="#4ba6ee" stroke-width="1" />
<line x1="489.6" y1="40.4" x2="484.4" y2="45.6" stroke="#4ba6ee" stroke-width="2.5" stroke-linecap="round"/>
<polygon points="487.575,59.585 491.625,59.585 489.6,62.285" fill="#e8e8e8" />
<polygon points="530.217,37.1305 530.217,39.4695 528.11,39.8687 527.43,41.511 528.637,43.2835 526.983,44.9374 525.211,43.7296 523.569,44.4098 523.169,46.5172 520.831,46.5172 520.431,44.4098 518.789,43.7296 517.017,44.9374 515.363,43.2835 516.57,41.511 515.89,39.8687 513.783,39.4695 513.783,37.1305 515.89,36.7313 516.57,35.089 515.363,33.3165 517.017,31.6626 518.789,32.8704 520.431,32.1902 520.831,30.0828 523.169,30.0828 523.569,32.1902 525.211,32.8704 526.983,31.6626 528.637,33.3165 527.43,35.089 528.11,36.7313" fill="none" stroke="#f0f0f0" stroke-width="0.85" stroke-linejoin="round"/>
<circle cx="522" cy="38.3" r="4.3" fill="none" stroke="#f0f0f0" stroke-width="0.7" />
<circle cx="522" cy="38.3" r="2.7" fill="none" stroke="#f0f0f0" stroke-width="0.7" />
<polygon points="519.975,59.585 524.025,59.585 522,62.285" fill="#e8e8e8" />
<rect x="550" y="31.4" width="17" height="3.2" fill="none" stroke="#ececec" stroke-width="0.7" rx="1.6"/>
<circle cx="554.4" cy="33" r="2.5" fill="#4ba6ee" />
<rect x="550" y="36.8" width="17" height="3.2" fill="none" stroke="#ececec" stroke-width="0.7" rx="1.6"/>
<circle cx="561.6" cy="38.4" r="2.5" fill="#4ba6ee" />
<rect x="550" y="42.2" width="17" height="3.2" fill="none" stroke="#ececec" stroke-width="0.7" rx="1.6"/>
<circle cx="556.8" cy="43.8" r="2.5" fill="#4ba6ee" />
<polygon points="556.575,59.585 560.625,59.585 558.6,62.285" fill="#e8e8e8" />
<polygon points="586.6,37.4 599.4,37.4 598.2,38.8 587.8,38.8" fill="#f0f0f0" />
<rect x="588.2" y="39.8" width="9.4" height="7" fill="#f0f0f0" />
<polygon points="587.2,31.4 587.69,32.31 588.6,32.8 587.69,33.29 587.2,34.2 586.71,33.29 585.8,32.8 586.71,32.31" fill="#f0a81c" />
<polygon points="593.2,32.8 593.69,33.71 594.6,34.2 593.69,34.69 593.2,35.6 592.71,34.69 591.8,34.2 592.71,33.71" fill="#f0a81c" />
<polygon points="599.4,31.7 599.925,32.675 600.9,33.2 599.925,33.725 599.4,34.7 598.875,33.725 597.9,33.2 598.875,32.675" fill="#f0a81c" />
<polygon points="590.575,59.585 594.625,59.585 592.6,62.285" fill="#e8e8e8" />
<circle cx="616.4" cy="34.6" r="2.6" fill="none" stroke="#555555" stroke-width="0.7" />
<path d="M616.4 30.4 v8.4 M612.2 34.6 h8.4" fill="none" stroke="#555555" stroke-width="0.6" />
<circle cx="616.4" cy="46.6" r="3.5" fill="none" stroke="#555555" stroke-width="0.7" />
<circle cx="616.4" cy="46.6" r="1" fill="#555555" />
<rect x="645.2" y="31.4" width="8.6" height="7.4" fill="#1e1e1e" stroke="#e0e0e0" stroke-width="0.8"/>
<line x1="645.2" y1="32.3" x2="653.8" y2="32.3" stroke="#e0e0e0" stroke-width="1" />
<path d="M647.6 35.4 q2 -1.2 4 1" fill="none" stroke="#3fb52f" stroke-width="1.1" />
<rect x="645.2" y="43.2" width="8.6" height="7.6" fill="#1e1e1e" stroke="#e0e0e0" stroke-width="0.8"/>
<rect x="645.6" y="43.6" width="2.8" height="6.8" fill="#8a8a8a" />
<line x1="645.2" y1="44" x2="653.8" y2="44" stroke="#e0e0e0" stroke-width="0.9" />
<polygon points="670.575,45.985 674.625,45.985 672.6,48.685" fill="#e8e8e8" />
<rect x="139.8" y="78.5" width="4.2" height="0.8" fill="#f2f2f2" />
<rect x="140.5" y="79.1" width="2.8" height="2.4" fill="#f2f2f2" />
<polygon points="140.5,81 139,82.6 144.8,82.6 143.3,81" fill="#f2f2f2" />
<polygon points="141.15,82.5 142.65,82.5 141.9,85.4" fill="#f2f2f2" />
<path d="M155 79.4 L160.4 84.8 M160.4 79.4 L155 84.8" fill="none" stroke="#f4f4f4" stroke-width="1.7" />
<rect x="3.6" y="94.8" width="8.8" height="8.9" fill="none" stroke="#e4e4e4" stroke-width="0.9"/>
<line x1="5.8" y1="99.25" x2="10.2" y2="99.25" stroke="#f0f0f0" stroke-width="0.9" />
<rect x="15" y="94.8" width="8.8" height="8.9" fill="none" stroke="#e4e4e4" stroke-width="0.9"/>
<line x1="17.2" y1="99.25" x2="21.6" y2="99.25" stroke="#f0f0f0" stroke-width="0.9" />
<line x1="19.4" y1="97.05" x2="19.4" y2="101.45" stroke="#f0f0f0" stroke-width="0.9" />
<rect x="27.6" y="92.6" width="114.8" height="13.9" fill="#222222" stroke="#858585" stroke-width="0.6" rx="6.95"/>
<circle cx="134.4" cy="98.15" r="2.1" fill="none" stroke="#cfcfcf" stroke-width="0.75" />
<line x1="136.1" y1="99.85" x2="138.9" y2="102.55" stroke="#d4d4d4" stroke-width="1.4" />
<line x1="145.2" y1="97.2" x2="154.4" y2="97.2" stroke="#b8b8b8" stroke-width="0.9" />
<circle cx="148.4" cy="97.2" r="1.25" fill="#3fa8f4" />
<line x1="145.2" y1="99.9" x2="154.4" y2="99.9" stroke="#b8b8b8" stroke-width="0.9" />
<circle cx="152.2" cy="99.9" r="1.25" fill="#3fa8f4" />
<line x1="145.2" y1="102.6" x2="154.4" y2="102.6" stroke="#b8b8b8" stroke-width="0.9" />
<circle cx="149.2" cy="102.6" r="1.25" fill="#3fa8f4" />
<polygon points="166.857,98.7941 166.857,100.006 165.765,100.213 165.413,101.064 166.039,101.982 165.182,102.839 164.264,102.213 163.413,102.565 163.206,103.657 161.994,103.657 161.787,102.565 160.936,102.213 160.018,102.839 159.161,101.982 159.787,101.064 159.435,100.213 158.343,100.006 158.343,98.7941 159.435,98.5873 159.787,97.7365 159.161,96.8182 160.018,95.9614 160.936,96.5871 161.787,96.2347 161.994,95.1429 163.206,95.1429 163.413,96.2347 164.264,96.5871 165.182,95.9614 166.039,96.8182 165.413,97.7365 165.765,98.5873" fill="#b4b4b4" stroke="#d8d8d8" stroke-width="0.5" stroke-linejoin="round"/>
<circle cx="162.6" cy="99.4" r="1.5" fill="#262626" />
<rect x="22" y="173.202" width="147.8" height="10.2" fill="#1f4e63" stroke="#2f84a8" stroke-width="0.7"/>
<line x1="16.3" y1="118.9" x2="16.3" y2="129.567" stroke="#bdbdbd" stroke-width="0.7" />
<line x1="16.3" y1="124.967" x2="22" y2="124.967" stroke="#bdbdbd" stroke-width="0.7" />
<line x1="16.3" y1="161.968" x2="16.3" y2="172.035" stroke="#bdbdbd" stroke-width="0.7" />
<line x1="27" y1="161.368" x2="27" y2="168.235" stroke="#bdbdbd" stroke-width="0.7" />
<line x1="27" y1="168.235" x2="32.5" y2="168.235" stroke="#bdbdbd" stroke-width="0.7" />
<line x1="27" y1="182.702" x2="27" y2="189.569" stroke="#bdbdbd" stroke-width="0.7" />
<line x1="27" y1="189.569" x2="32.5" y2="189.569" stroke="#bdbdbd" stroke-width="0.7" />
<line x1="4" y1="114.3" x2="8.4" y2="114.3" stroke="#e6e6e6" stroke-width="1" />
<path d="M13.6 110.6 h2.8 q3.2 0.8 3.2 2.8 q0 1.6 -2.8 3 l-0.5 1.6 h-2.7 z" fill="none" stroke="#e2a21a" stroke-width="0.9" stroke-linejoin="round"/>
<path d="M15.2 112.4 l2.4 1.2 l-2.4 1.4 z" fill="#e2a21a" />
<line x1="23.2" y1="122.467" x2="31" y2="122.467" stroke="#dcdcdc" stroke-width="0.9" />
<rect x="24.7" y="121.367" width="1.8" height="2.2" fill="#f4f4f4" />
<line x1="23.2" y1="124.967" x2="31" y2="124.967" stroke="#dcdcdc" stroke-width="0.9" />
<rect x="27.7" y="123.867" width="1.8" height="2.2" fill="#f4f4f4" />
<line x1="23.2" y1="127.467" x2="31" y2="127.467" stroke="#dcdcdc" stroke-width="0.9" />
<rect x="25.3" y="126.367" width="1.8" height="2.2" fill="#f4f4f4" />
<line x1="14.1" y1="135.634" x2="18.9" y2="135.634" stroke="#f0f0f0" stroke-width="1" />
<line x1="16.5" y1="133.234" x2="16.5" y2="138.034" stroke="#f0f0f0" stroke-width="1" />
<polygon points="31.1621,135.099 31.1621,136.169 30.1973,136.352 29.8858,137.104 30.4388,137.916 29.6816,138.673 28.8701,138.12 28.1182,138.431 27.9354,139.396 26.8646,139.396 26.6818,138.431 25.9299,138.12 25.1184,138.673 24.3612,137.916 24.9142,137.104 24.6027,136.352 23.6379,136.169 23.6379,135.099 24.6027,134.916 24.9142,134.164 24.3612,133.352 25.1184,132.595 25.9299,133.148 26.6818,132.837 26.8646,131.872 27.9354,131.872 28.1182,132.837 28.8701,133.148 29.6816,132.595 30.4388,133.352 29.8858,134.164 30.1973,134.916" fill="#6e6e6e" stroke="#d6d6d6" stroke-width="0.55" stroke-linejoin="round"/>
<circle cx="27.4" cy="135.634" r="1.8" fill="#262626" stroke="#d0d0d0" stroke-width="0.5" />
<line x1="14.1" y1="146.301" x2="18.9" y2="146.301" stroke="#f0f0f0" stroke-width="1" />
<line x1="16.5" y1="143.901" x2="16.5" y2="148.701" stroke="#f0f0f0" stroke-width="1" />
<path d="M24 148.901 l2.4 -4 l3.6 2" fill="none" stroke="#4a8dc0" stroke-width="0.8" />
<circle cx="24.1" cy="148.901" r="1" fill="none" stroke="#4a8dc0" stroke-width="0.7" />
<circle cx="26.4" cy="144.701" r="1" fill="#4a8dc0" />
<circle cx="30.2" cy="146.901" r="0.9" fill="#4a8dc0" />
<line x1="14.3" y1="156.968" x2="18.7" y2="156.968" stroke="#e6e6e6" stroke-width="1" />
<path d="M24 159.568 l2.4 -4 l3.6 2" fill="none" stroke="#4a8dc0" stroke-width="0.8" />
<circle cx="24.1" cy="159.568" r="1" fill="none" stroke="#4a8dc0" stroke-width="0.7" />
<circle cx="26.4" cy="155.368" r="1" fill="#4a8dc0" />
<circle cx="30.2" cy="157.568" r="0.9" fill="#4a8dc0" />
<polygon points="41.7621,167.1 41.7621,168.17 40.7973,168.353 40.4858,169.105 41.0388,169.917 40.2816,170.674 39.4701,170.121 38.7182,170.432 38.5354,171.397 37.4646,171.397 37.2818,170.432 36.5299,170.121 35.7184,170.674 34.9612,169.917 35.5142,169.105 35.2027,168.353 34.2379,168.17 34.2379,167.1 35.2027,166.917 35.5142,166.165 34.9612,165.353 35.7184,164.596 36.5299,165.149 37.2818,164.838 37.4646,163.873 38.5354,163.873 38.7182,164.838 39.4701,165.149 40.2816,164.596 41.0388,165.353 40.4858,166.165 40.7973,166.917" fill="#6e6e6e" stroke="#d6d6d6" stroke-width="0.55" stroke-linejoin="round"/>
<circle cx="38" cy="167.635" r="1.8" fill="#262626" stroke="#d0d0d0" stroke-width="0.5" />
<line x1="14.3" y1="178.302" x2="18.7" y2="178.302" stroke="#e6e6e6" stroke-width="1" />
<path d="M24 180.902 l2.4 -4 l3.6 2" fill="none" stroke="#5aa0d4" stroke-width="0.8" />
<circle cx="24.1" cy="180.902" r="1" fill="none" stroke="#5aa0d4" stroke-width="0.7" />
<circle cx="26.4" cy="176.702" r="1" fill="#5aa0d4" />
<circle cx="30.2" cy="178.902" r="0.9" fill="#5aa0d4" />
<polygon points="41.7621,188.434 41.7621,189.504 40.7973,189.687 40.4858,190.439 41.0388,191.251 40.2816,192.008 39.4701,191.455 38.7182,191.766 38.5354,192.731 37.4646,192.731 37.2818,191.766 36.5299,191.455 35.7184,192.008 34.9612,191.251 35.5142,190.439 35.2027,189.687 34.2379,189.504 34.2379,188.434 35.2027,188.251 35.5142,187.499 34.9612,186.687 35.7184,185.93 36.5299,186.483 37.2818,186.172 37.4646,185.207 38.5354,185.207 38.7182,186.172 39.4701,186.483 40.2816,185.93 41.0388,186.687 40.4858,187.499 40.7973,188.251" fill="#6e6e6e" stroke="#d6d6d6" stroke-width="0.55" stroke-linejoin="round"/>
<circle cx="38" cy="188.969" r="1.8" fill="#262626" stroke="#d0d0d0" stroke-width="0.5" />
<rect x="3.6" y="328.5" width="8.8" height="8.5" fill="none" stroke="#e4e4e4" stroke-width="0.9"/>
<line x1="5.8" y1="332.75" x2="10.2" y2="332.75" stroke="#f0f0f0" stroke-width="0.9" />
<rect x="15" y="328.5" width="8.8" height="8.5" fill="none" stroke="#e4e4e4" stroke-width="0.9"/>
<line x1="17.2" y1="332.75" x2="21.6" y2="332.75" stroke="#f0f0f0" stroke-width="0.9" />
<line x1="19.4" y1="330.55" x2="19.4" y2="334.95" stroke="#f0f0f0" stroke-width="0.9" />
<rect x="27.6" y="326.2" width="140.2" height="13.6" fill="#222222" stroke="#858585" stroke-width="0.6" rx="6.8"/>
<circle cx="159.8" cy="331.6" r="2.1" fill="none" stroke="#cfcfcf" stroke-width="0.75" />
<line x1="161.5" y1="333.3" x2="164.3" y2="336" stroke="#d4d4d4" stroke-width="1.4" />
<rect x="162.9" y="342.5" width="7.3" height="210.9" fill="#3a3a3a" />
<rect x="164.6" y="352.5" width="4" height="164.5" fill="#5e5e5e" />
<polygon points="164.9,348.2 168.5,348.2 166.7,345.2" fill="#575757" />
<polygon points="164.9,547 168.5,547 166.7,550" fill="#575757" />
<line x1="4" y1="348.1" x2="8.4" y2="348.1" stroke="#e6e6e6" stroke-width="1" />
<path d="M13.4 347.2 l1.8 -2.2 h4 l1.8 2.2 l-3.8 4 z M13.4 347.2 h7.6 M15.8 347.2 l1.4 3.4 l1.4 -3.4" fill="none" stroke="#e6e6e6" stroke-width="0.6" stroke-linejoin="round"/>
<defs><clipPath id="lp"><rect x="0" y="342" width="171" height="211.7"/></clipPath></defs><g clip-path="url(#lp)">
<line x1="16.3" y1="352.7" x2="16.3" y2="553.7" stroke="#bdbdbd" stroke-width="0.7" />
<line x1="16.3" y1="358.767" x2="22" y2="358.767" stroke="#bdbdbd" stroke-width="0.7" />
<circle cx="26" cy="356.867" r="1.75" fill="none" stroke="#e2a21a" stroke-width="0.8" />
<circle cx="26" cy="360.667" r="1.75" fill="none" stroke="#e2a21a" stroke-width="0.8" />
<circle cx="29.2" cy="358.767" r="1.75" fill="none" stroke="#e2a21a" stroke-width="0.8" />
<line x1="16.3" y1="369.434" x2="22" y2="369.434" stroke="#bdbdbd" stroke-width="0.7" />
<circle cx="26" cy="367.534" r="1.75" fill="none" stroke="#e2a21a" stroke-width="0.8" />
<circle cx="26" cy="371.334" r="1.75" fill="none" stroke="#e2a21a" stroke-width="0.8" />
<circle cx="29.2" cy="369.434" r="1.75" fill="none" stroke="#e2a21a" stroke-width="0.8" />
<line x1="16.3" y1="380.101" x2="22" y2="380.101" stroke="#bdbdbd" stroke-width="0.7" />
<circle cx="26" cy="378.201" r="1.75" fill="none" stroke="#e2a21a" stroke-width="0.8" />
<circle cx="26" cy="382.001" r="1.75" fill="none" stroke="#e2a21a" stroke-width="0.8" />
<circle cx="29.2" cy="380.101" r="1.75" fill="none" stroke="#e2a21a" stroke-width="0.8" />
<line x1="16.3" y1="390.768" x2="22" y2="390.768" stroke="#bdbdbd" stroke-width="0.7" />
<circle cx="26" cy="388.868" r="1.75" fill="none" stroke="#e2a21a" stroke-width="0.8" />
<circle cx="26" cy="392.668" r="1.75" fill="none" stroke="#e2a21a" stroke-width="0.8" />
<circle cx="29.2" cy="390.768" r="1.75" fill="none" stroke="#e2a21a" stroke-width="0.8" />
<line x1="16.3" y1="401.435" x2="22" y2="401.435" stroke="#bdbdbd" stroke-width="0.7" />
<circle cx="26" cy="399.535" r="1.75" fill="none" stroke="#e2a21a" stroke-width="0.8" />
<circle cx="26" cy="403.335" r="1.75" fill="none" stroke="#e2a21a" stroke-width="0.8" />
<circle cx="29.2" cy="401.435" r="1.75" fill="none" stroke="#e2a21a" stroke-width="0.8" />
<line x1="16.3" y1="412.102" x2="22" y2="412.102" stroke="#bdbdbd" stroke-width="0.7" />
<circle cx="26" cy="410.202" r="1.75" fill="none" stroke="#e2a21a" stroke-width="0.8" />
<circle cx="26" cy="414.002" r="1.75" fill="none" stroke="#e2a21a" stroke-width="0.8" />
<circle cx="29.2" cy="412.102" r="1.75" fill="none" stroke="#e2a21a" stroke-width="0.8" />
<line x1="16.3" y1="422.769" x2="22" y2="422.769" stroke="#bdbdbd" stroke-width="0.7" />
<circle cx="26" cy="420.869" r="1.75" fill="none" stroke="#e2a21a" stroke-width="0.8" />
<circle cx="26" cy="424.669" r="1.75" fill="none" stroke="#e2a21a" stroke-width="0.8" />
<circle cx="29.2" cy="422.769" r="1.75" fill="none" stroke="#e2a21a" stroke-width="0.8" />
<line x1="16.3" y1="433.436" x2="22" y2="433.436" stroke="#bdbdbd" stroke-width="0.7" />
<circle cx="26" cy="431.536" r="1.75" fill="none" stroke="#e2a21a" stroke-width="0.8" />
<circle cx="26" cy="435.336" r="1.75" fill="none" stroke="#e2a21a" stroke-width="0.8" />
<circle cx="29.2" cy="433.436" r="1.75" fill="none" stroke="#e2a21a" stroke-width="0.8" />
<line x1="16.3" y1="444.103" x2="22" y2="444.103" stroke="#bdbdbd" stroke-width="0.7" />
<circle cx="26" cy="442.203" r="1.75" fill="none" stroke="#e2a21a" stroke-width="0.8" />
<circle cx="26" cy="446.003" r="1.75" fill="none" stroke="#e2a21a" stroke-width="0.8" />
<circle cx="29.2" cy="444.103" r="1.75" fill="none" stroke="#e2a21a" stroke-width="0.8" />
<line x1="16.3" y1="454.77" x2="22" y2="454.77" stroke="#bdbdbd" stroke-width="0.7" />
<circle cx="26" cy="452.87" r="1.75" fill="none" stroke="#e2a21a" stroke-width="0.8" />
<circle cx="26" cy="456.67" r="1.75" fill="none" stroke="#e2a21a" stroke-width="0.8" />
<circle cx="29.2" cy="454.77" r="1.75" fill="none" stroke="#e2a21a" stroke-width="0.8" />
<line x1="16.3" y1="465.437" x2="22" y2="465.437" stroke="#bdbdbd" stroke-width="0.7" />
<circle cx="26" cy="463.537" r="1.75" fill="none" stroke="#e2a21a" stroke-width="0.8" />
<circle cx="26" cy="467.337" r="1.75" fill="none" stroke="#e2a21a" stroke-width="0.8" />
<circle cx="29.2" cy="465.437" r="1.75" fill="none" stroke="#e2a21a" stroke-width="0.8" />
<line x1="16.3" y1="476.104" x2="22" y2="476.104" stroke="#bdbdbd" stroke-width="0.7" />
<circle cx="26" cy="474.204" r="1.75" fill="none" stroke="#e2a21a" stroke-width="0.8" />
<circle cx="26" cy="478.004" r="1.75" fill="none" stroke="#e2a21a" stroke-width="0.8" />
<circle cx="29.2" cy="476.104" r="1.75" fill="none" stroke="#e2a21a" stroke-width="0.8" />
<line x1="16.3" y1="486.771" x2="22" y2="486.771" stroke="#bdbdbd" stroke-width="0.7" />
<circle cx="26" cy="484.871" r="1.75" fill="none" stroke="#e2a21a" stroke-width="0.8" />
<circle cx="26" cy="488.671" r="1.75" fill="none" stroke="#e2a21a" stroke-width="0.8" />
<circle cx="29.2" cy="486.771" r="1.75" fill="none" stroke="#e2a21a" stroke-width="0.8" />
<line x1="16.3" y1="497.438" x2="22" y2="497.438" stroke="#bdbdbd" stroke-width="0.7" />
<circle cx="26" cy="495.538" r="1.75" fill="none" stroke="#e2a21a" stroke-width="0.8" />
<circle cx="26" cy="499.338" r="1.75" fill="none" stroke="#e2a21a" stroke-width="0.8" />
<circle cx="29.2" cy="497.438" r="1.75" fill="none" stroke="#e2a21a" stroke-width="0.8" />
<line x1="16.3" y1="508.105" x2="22" y2="508.105" stroke="#bdbdbd" stroke-width="0.7" />
<circle cx="26" cy="506.205" r="1.75" fill="none" stroke="#e2a21a" stroke-width="0.8" />
<circle cx="26" cy="510.005" r="1.75" fill="none" stroke="#e2a21a" stroke-width="0.8" />
<circle cx="29.2" cy="508.105" r="1.75" fill="none" stroke="#e2a21a" stroke-width="0.8" />
<line x1="16.3" y1="518.772" x2="22" y2="518.772" stroke="#bdbdbd" stroke-width="0.7" />
<circle cx="26" cy="516.872" r="1.75" fill="none" stroke="#e2a21a" stroke-width="0.8" />
<circle cx="26" cy="520.672" r="1.75" fill="none" stroke="#e2a21a" stroke-width="0.8" />
<circle cx="29.2" cy="518.772" r="1.75" fill="none" stroke="#e2a21a" stroke-width="0.8" />
<line x1="16.3" y1="529.439" x2="22" y2="529.439" stroke="#bdbdbd" stroke-width="0.7" />
<circle cx="26" cy="527.539" r="1.75" fill="none" stroke="#e2a21a" stroke-width="0.8" />
<circle cx="26" cy="531.339" r="1.75" fill="none" stroke="#e2a21a" stroke-width="0.8" />
<circle cx="29.2" cy="529.439" r="1.75" fill="none" stroke="#e2a21a" stroke-width="0.8" />
<line x1="16.3" y1="540.106" x2="22" y2="540.106" stroke="#bdbdbd" stroke-width="0.7" />
<circle cx="26" cy="538.206" r="1.75" fill="none" stroke="#e2a21a" stroke-width="0.8" />
<circle cx="26" cy="542.006" r="1.75" fill="none" stroke="#e2a21a" stroke-width="0.8" />
<circle cx="29.2" cy="540.106" r="1.75" fill="none" stroke="#e2a21a" stroke-width="0.8" />
<line x1="16.3" y1="550.773" x2="22" y2="550.773" stroke="#bdbdbd" stroke-width="0.7" />
<circle cx="26" cy="548.873" r="1.75" fill="none" stroke="#e2a21a" stroke-width="0.8" />
<circle cx="26" cy="552.673" r="1.75" fill="none" stroke="#e2a21a" stroke-width="0.8" />
<circle cx="29.2" cy="550.773" r="1.75" fill="none" stroke="#e2a21a" stroke-width="0.8" />
</g>
<rect x="993.3" y="78.5" width="4.2" height="0.8" fill="#f2f2f2" />
<rect x="994" y="79.1" width="2.8" height="2.4" fill="#f2f2f2" />
<polygon points="994,81 992.5,82.6 998.3,82.6 996.8,81" fill="#f2f2f2" />
<polygon points="994.65,82.5 996.15,82.5 995.4,85.4" fill="#f2f2f2" />
<path d="M1008.5 79.4 L1013.9 84.8 M1013.9 79.4 L1008.5 84.8" fill="none" stroke="#f4f4f4" stroke-width="1.7" />
<circle cx="869.6" cy="116.4" r="3.9" fill="#262626" stroke="#d4d4d4" stroke-width="0.8" />
<circle cx="869.6" cy="116.4" r="2" fill="#f4f4f4" />
<circle cx="920.4" cy="116.4" r="3.9" fill="#262626" stroke="#d4d4d4" stroke-width="0.8" />
<circle cx="971" cy="116.4" r="3.9" fill="#262626" stroke="#d4d4d4" stroke-width="0.8" />
<rect x="791" y="127.3" width="74" height="10.6" fill="#fbfbfb" />
<rect x="791.5" y="127.8" width="73" height="9.6" fill="#e9e9e9" />
<rect x="791" y="127.3" width="8.1" height="10.6" fill="#f23c14" />
<rect x="867.8" y="127.3" width="74.2" height="10.6" fill="#fbfbfb" />
<rect x="868.3" y="127.8" width="73.2" height="9.6" fill="#e9e9e9" />
<rect x="867.8" y="127.3" width="8.1" height="10.6" fill="#2bab48" />
<rect x="944.5" y="127.3" width="76.5" height="10.6" fill="#fbfbfb" />
<rect x="945" y="127.8" width="75.5" height="9.6" fill="#e9e9e9" />
<rect x="944.5" y="127.3" width="8.1" height="10.6" fill="#1224cc" />
<rect x="791" y="141" width="74" height="10.3" fill="#fbfbfb" />
<rect x="791.5" y="141.5" width="73" height="9.3" fill="#e9e9e9" />
<rect x="791" y="141" width="8.1" height="10.3" fill="#f23c14" />
<rect x="867.8" y="141" width="74.2" height="10.3" fill="#fbfbfb" />
<rect x="868.3" y="141.5" width="73.2" height="9.3" fill="#e9e9e9" />
<rect x="867.8" y="141" width="8.1" height="10.3" fill="#2bab48" />
<rect x="944.5" y="141" width="76.5" height="10.3" fill="#fbfbfb" />
<rect x="945" y="141.5" width="75.5" height="9.3" fill="#e9e9e9" />
<rect x="944.5" y="141" width="8.1" height="10.3" fill="#1224cc" />
<rect x="861.8" y="162.2" width="159.2" height="10.7" fill="#fbfbfb" />
<rect x="862.3" y="162.7" width="158.2" height="9.7" fill="#e9e9e9" />
<rect x="861.8" y="175.4" width="159.2" height="10.6" fill="#fbfbfb" />
<rect x="862.3" y="175.9" width="158.2" height="9.6" fill="#e9e9e9" />
<rect x="861.8" y="189" width="159.2" height="10.5" fill="#fbfbfb" />
<rect x="862.3" y="189.5" width="158.2" height="9.5" fill="#e9e9e9" />
<rect x="861.8" y="202.9" width="159.2" height="10" fill="#fbfbfb" />
<rect x="862.3" y="203.4" width="158.2" height="9" fill="#e9e9e9" />
<polygon points="1015.2,193.4 1018.4,193.4 1016.8,195.4" fill="#555555" />
<polygon points="1015.2,207.1 1018.4,207.1 1016.8,209.1" fill="#555555" />
<rect x="861.8" y="238.8" width="159.2" height="10.2" fill="#fbfbfb" />
<rect x="862.3" y="239.3" width="158.2" height="9.2" fill="#e9e9e9" />
<rect x="861.8" y="251.5" width="159.2" height="10.4" fill="#fbfbfb" />
<rect x="862.3" y="252" width="158.2" height="9.4" fill="#e9e9e9" />
<rect x="861.8" y="264" width="159.2" height="10.2" fill="#fbfbfb" />
<rect x="862.3" y="264.5" width="158.2" height="9.2" fill="#e9e9e9" />
<rect x="861.8" y="276.2" width="159.2" height="10.3" fill="#fbfbfb" />
<rect x="862.3" y="276.7" width="158.2" height="9.3" fill="#e9e9e9" />
<rect x="861.8" y="289" width="159.2" height="11" fill="#fbfbfb" />
<rect x="862.3" y="289.5" width="158.2" height="10" fill="#e9e9e9" />
<rect x="861.8" y="306.3" width="159.2" height="10.6" fill="#fbfbfb" />
<rect x="862.3" y="306.8" width="158.2" height="9.6" fill="#e9e9e9" />
<rect x="861.8" y="320.2" width="159.2" height="10.7" fill="#fbfbfb" />
<rect x="862.3" y="320.7" width="158.2" height="9.7" fill="#e9e9e9" />
<polygon points="1015.2,255.9 1018.4,255.9 1016.8,257.9" fill="#555555" />
<rect x="754.7" y="441" width="4.2" height="0.8" fill="#f2f2f2" />
<rect x="755.4" y="441.6" width="2.8" height="2.4" fill="#f2f2f2" />
<polygon points="755.4,443.5 753.9,445.1 759.7,445.1 758.2,443.5" fill="#f2f2f2" />
<polygon points="756.05,445 757.55,445 756.8,447.9" fill="#f2f2f2" />
<path d="M769.9 441.9 L775.3 447.3 M775.3 441.9 L769.9 447.3" fill="none" stroke="#f4f4f4" stroke-width="1.7" />
<rect x="25.6" y="554.8" width="183.2" height="21.2" fill="#f2f2f2" />
<rect x="8.2" y="561.2" width="4.2" height="4.2" fill="#fafafa" />
<rect x="13" y="561.2" width="4.2" height="4.2" fill="#fafafa" />
<rect x="8.2" y="566" width="4.2" height="4.2" fill="#fafafa" />
<rect x="13" y="566" width="4.2" height="4.2" fill="#fafafa" />
<polygon points="8.2,561.2 17.2,561.2 17.2,560.2" fill="#151515" />
<circle cx="38.2" cy="563.4" r="2.9" fill="none" stroke="#3a3a3a" stroke-width="0.8" />
<line x1="36.2" y1="565.6" x2="32.4" y2="569.6" stroke="#3a3a3a" stroke-width="0.9" />
<rect x="218.4" y="562.2" width="5.2" height="5.8" fill="none" stroke="#e6e6e6" stroke-width="0.8"/>
<path d="M217.2 560.6 h7.6 M217.2 569.6 h7.6" fill="none" stroke="#e6e6e6" stroke-width="0.8" />
<line x1="226" y1="560.4" x2="226" y2="562.4" stroke="#e6e6e6" stroke-width="0.9" />
<line x1="226" y1="564" x2="226" y2="569.8" stroke="#e6e6e6" stroke-width="0.9" />
<rect x="243.4" y="560.4" width="11.2" height="9.4" fill="#f5c13a" rx="0.8"/>
<rect x="243.4" y="559.6" width="5.2" height="2.4" fill="#e8a820" rx="0.6"/>
<rect x="243.4" y="563" width="11.2" height="6.8" fill="#fbd869" />
<rect x="246" y="566.4" width="6" height="3.4" fill="#3c8ad8" />
<rect x="247.6" y="567.6" width="2.8" height="2.2" fill="#fbd869" />
<rect x="272.6" y="559.8" width="9" height="10.2" fill="#1f7ad0" rx="1"/>
<rect x="276.8" y="560.6" width="5" height="4.4" fill="#52b0f0" />
<rect x="276.8" y="565" width="5" height="4.4" fill="#1462b4" />
<rect x="268.6" y="561.8" width="8" height="7" fill="#0f62b8" rx="1"/>
<circle cx="272.6" cy="565.3" r="2.1" fill="none" stroke="#ffffff" stroke-width="1" />
<circle cx="301.3" cy="565.2" r="5.5" fill="#f0482a" />
<path d="M296.4 563 q-1.4 4.6 2.6 7 q4.6 1.8 7.4 -2.4 q1.6 -3.6 -0.8 -6.6 q0.6 2.6 -1.2 3.6 q-0.6 -3.6 -3 -5 q0.6 2 -1.6 3.4 q-2 -0.4 -3.4 0z" fill="#f8a820" />
<circle cx="301.2" cy="565.6" r="2.5" fill="#7a3ed0" />
<circle cx="327.4" cy="565.2" r="5.6" fill="#18a8ee" />
<circle cx="324.4" cy="562.2" r="3" fill="#18a8ee" />
<circle cx="330.6" cy="568.4" r="3" fill="#18a8ee" />
<circle cx="327.4" cy="565.2" r="4" fill="#ffffff" />
<rect x="341" y="554.6" width="25.4" height="21.4" fill="#3c3c3c" />
<rect x="341" y="574.6" width="25.4" height="1.4" fill="#8cb4e6" />
<rect x="347.8" y="559.2" width="11.8" height="12" fill="#222b38" />
<line x1="350.9" y1="562.4" x2="354.7" y2="568.6" stroke="#f4ac14" stroke-width="2.2" stroke-linecap="round"/>
<polygon points="354.6,561.6 358.4,561.6 356.2,564.6" fill="#f4ac14" />
<path d="M866.6 568.6 a2.6 2.6 0 0 1 0.4 -5.2 a3.6 3.6 0 0 1 6.8 -0.8 a3.1 3.1 0 0 1 0.6 6 z" fill="#f0f0f8" />
<path d="M866.6 568.6 h7.8 a3 3 0 0 0 2.2 -3 q-4 2.6 -11.8 1 a2.6 2.6 0 0 0 1.8 2 z" fill="#b8c4e8" />
<circle cx="874.8" cy="570.4" r="1.3" fill="#e02020" />
<path d="M932.2 567 l3.2 -3.2 l3.2 3.2" fill="none" stroke="#f0f0f0" stroke-width="0.8" />
<rect x="945.4" y="561.4" width="8" height="5.6" fill="none" stroke="#f0f0f0" stroke-width="0.7"/>
<rect x="944.2" y="564.4" width="3.8" height="5" fill="#151515" stroke="#f0f0f0" stroke-width="0.7"/>
<line x1="948.6" y1="569.4" x2="952.4" y2="569.4" stroke="#f0f0f0" stroke-width="0.7" />
<polygon points="957.4,564 959.2,564 961.4,561.8 961.4,568.8 959.2,566.6 957.4,566.6" fill="none" stroke="#f0f0f0" stroke-width="0.6" />
<path d="M962.8 563.4 q1.4 1.9 0 3.8 M964.4 562 q2.6 3.3 0 6.6" fill="none" stroke="#f0f0f0" stroke-width="0.6" />
<line x1="1021.8" y1="555" x2="1021.8" y2="576" stroke="#6a6a6a" stroke-width="0.6" />
</svg>
<div id="txt">
<span class="t" style="font-size:24px;color:#d4d4d4;transform:scaleX(0.820);transform-origin:0 50%;left:782.8px;top:152.4px;">0:00:00</span>
<span class="t" style="font-size:12px;color:#a6cef8;left:887.6px;top:153.9px;">x</span>
<span class="t" style="font-size:15.5px;color:#a6cef8;transform:scaleX(0.800);transform-origin:0 50%;left:900.8px;top:154.2px;">1.0</span>
<span class="t" style="font-size:17px;color:#2f2f2f;letter-spacing:0.23px;left:826.9px;top:561.5px;">End</span>
<span class="t" style="font-size:17px;color:#444444;letter-spacing:0.88px;left:926.2px;top:645.9px;">Start</span>
<span class="t" style="font-size:14px;color:#ffffff;font-weight:bold;left:93.8px;width:600px;text-align:center;top:692.6px;">B</span>
<span class="t" style="font-size:14px;color:#ffffff;font-weight:bold;left:52.9px;width:600px;text-align:center;top:733.8px;">L</span>
<span class="t" style="font-size:14px;color:#ffffff;font-weight:bold;left:93.8px;width:600px;text-align:center;top:733.8px;">T</span>
<span class="t" style="font-size:14px;color:#ffffff;font-weight:bold;left:134.6px;width:600px;text-align:center;top:733.8px;">R</span>
<span class="t" style="font-size:14px;color:#ffffff;font-weight:bold;left:93.8px;width:600px;text-align:center;top:775.2px;">F</span>
<span class="t" style="font-size:10.5px;color:#c9d3e2;left:1606.1px;width:600px;text-align:center;top:28.4px;">?</span>
<span class="t" style="font-size:13.5px;color:#d9d9d9;letter-spacing:0.14px;left:810.0px;top:3.5px;">Strapping Machine.vcmx - Visual Components Premium 4.3</span>
<span class="t" style="font-size:12px;color:#ffffff;transform:scaleX(0.792);transform-origin:0 50%;left:18.4px;top:28.8px;">FILE</span>
<span class="t" style="font-size:12px;color:#e8e8e8;letter-spacing:-0.19px;left:72.6px;top:28.8px;">HOME</span>
<span class="t" style="font-size:12px;color:#e8e8e8;transform:scaleX(0.863);transform-origin:0 50%;left:136.9px;top:28.8px;">PROCESS</span>
<span class="t" style="font-size:12px;color:#2f7fa3;transform:scaleX(0.946);transform-origin:0 50%;left:216.0px;top:28.8px;">MODELING</span>
<span class="t" style="font-size:12px;color:#e8e8e8;transform:scaleX(0.913);transform-origin:0 50%;left:307.1px;top:28.8px;">PROGRAM</span>
<span class="t" style="font-size:12px;color:#e8e8e8;transform:scaleX(0.938);transform-origin:0 50%;left:393.8px;top:28.8px;">DRAWING</span>
<span class="t" style="font-size:12px;color:#e8e8e8;transform:scaleX(0.873);transform-origin:0 50%;left:477.8px;top:28.8px;">HELP</span>
<span class="t" style="font-size:12px;color:#dedede;transform:scaleX(0.931);transform-origin:0 50%;left:8.4px;top:119.2px;">Clipboard</span>
<span class="t" style="font-size:12px;color:#dedede;transform:scaleX(0.951);transform-origin:0 50%;left:110.6px;top:119.2px;">Manipulation</span>
<span class="t" style="font-size:12px;color:#dedede;transform:scaleX(0.920);transform-origin:0 50%;left:251.2px;top:119.2px;">Grid Snap</span>
<span class="t" style="font-size:12px;color:#dedede;transform:scaleX(0.937);transform-origin:0 50%;left:356.2px;top:119.2px;">Tools</span>
<span class="t" style="font-size:12px;color:#dedede;transform:scaleX(0.923);transform-origin:0 50%;left:430.3px;top:119.2px;">Connect</span>
<span class="t" style="font-size:12px;color:#dedede;transform:scaleX(0.942);transform-origin:0 50%;left:522.2px;top:119.2px;">Move Mode</span>
<span class="t" style="font-size:12px;color:#dedede;letter-spacing:0.05px;left:626.2px;top:119.2px;">Import</span>
<span class="t" style="font-size:12px;color:#dedede;transform:scaleX(0.937);transform-origin:0 50%;left:683.4px;top:119.2px;">Component</span>
<span class="t" style="font-size:12px;color:#dedede;transform:scaleX(0.924);transform-origin:0 50%;left:771.6px;top:119.2px;">Structure</span>
<span class="t" style="font-size:12px;color:#dedede;transform:scaleX(0.943);transform-origin:0 50%;left:867.2px;top:119.2px;">Geometry</span>
<span class="t" style="font-size:12px;color:#dedede;transform:scaleX(0.910);transform-origin:0 50%;left:957.2px;top:119.2px;">Behavior</span>
<span class="t" style="font-size:12px;color:#dedede;transform:scaleX(0.908);transform-origin:0 50%;left:1021.9px;top:119.2px;">Properties</span>
<span class="t" style="font-size:12px;color:#dedede;transform:scaleX(0.904);transform-origin:0 50%;left:1097.8px;top:119.2px;">Extra</span>
<span class="t" style="font-size:12px;color:#dedede;transform:scaleX(0.966);transform-origin:0 50%;left:1155.9px;top:119.2px;">Origin</span>
<span class="t" style="font-size:12px;color:#dedede;transform:scaleX(0.924);transform-origin:0 50%;left:1240.3px;top:119.2px;">Windows</span>
<span class="t" style="font-size:12px;color:#6c6c6c;transform:scaleX(0.904);transform-origin:0 50%;left:25.3px;top:56.8px;">Copy</span>
<span class="t" style="font-size:12px;color:#6c6c6c;transform:scaleX(0.855);transform-origin:0 50%;left:25.3px;top:78.3px;">Paste</span>
<span class="t" style="font-size:12px;color:#e8e8e8;transform:scaleX(0.876);transform-origin:0 50%;left:26.2px;top:99.9px;">Delete</span>
<span class="t" style="font-size:12px;color:#e8e8e8;transform:scaleX(0.854);transform-origin:0 50%;left:78.8px;top:91.2px;">Select</span>
<span class="t" style="font-size:12px;color:#e8e8e8;transform:scaleX(0.933);transform-origin:0 50%;left:127.5px;top:91.2px;">Move</span>
<span class="t" style="font-size:12px;color:#ffffff;transform:scaleX(0.899);transform-origin:0 50%;left:172.5px;top:91.2px;">Interact</span>
<span class="t" style="font-size:12px;color:#6c6c6c;transform:scaleX(0.819);transform-origin:0 50%;left:226.9px;top:56.4px;">Size</span>
<span class="t" style="font-size:12px;color:#585858;transform:scaleX(0.749);transform-origin:0 50%;left:255.0px;top:56.4px;">100</span>
<span class="t" style="font-size:12px;color:#585858;transform:scaleX(0.844);transform-origin:0 50%;left:301.9px;top:56.8px;">mm</span>
<span class="t" style="font-size:12px;color:#e8e8e8;transform:scaleX(0.904);transform-origin:0 50%;left:249.4px;top:78.1px;">Automatic Size</span>
<span class="t" style="font-size:12px;color:#e8e8e8;transform:scaleX(0.870);transform-origin:0 50%;left:249.4px;top:99.9px;">Always Snap</span>
<span class="t" style="font-size:12px;color:#e8e8e8;transform:scaleX(0.916);transform-origin:0 50%;left:358.1px;top:55.6px;">Measure</span>
<span class="t" style="font-size:12px;color:#e8e8e8;transform:scaleX(0.870);transform-origin:0 50%;left:358.1px;top:77.4px;">Snap</span>
<span class="t" style="font-size:12px;color:#e8e8e8;transform:scaleX(0.956);transform-origin:0 50%;left:358.1px;top:99.1px;">Align</span>
<span class="t" style="font-size:12px;color:#e8e8e8;transform:scaleX(0.882);transform-origin:0 50%;left:436.9px;top:55.1px;">Interfaces</span>
<span class="t" style="font-size:12px;color:#e8e8e8;transform:scaleX(0.857);transform-origin:0 50%;left:436.9px;top:77.4px;">Signals</span>
<span class="t" style="font-size:12px;color:#ffffff;transform:scaleX(0.898);transform-origin:0 50%;left:502.5px;top:91.2px;">Hierarchy</span>
<span class="t" style="font-size:12px;color:#e8e8e8;transform:scaleX(0.883);transform-origin:0 50%;left:558.8px;top:91.2px;">Selected</span>
<span class="t" style="font-size:12px;color:#e8e8e8;transform:scaleX(0.932);transform-origin:0 50%;left:618.8px;top:91.2px;">Geometry</span>
<span class="t" style="font-size:12px;color:#e8e8e8;transform:scaleX(0.921);transform-origin:0 50%;left:703.1px;top:56.2px;">New</span>
<span class="t" style="font-size:12px;color:#e8e8e8;transform:scaleX(0.850);transform-origin:0 50%;left:704.2px;top:77.8px;">Save</span>
<span class="t" style="font-size:12px;color:#e8e8e8;transform:scaleX(0.852);transform-origin:0 50%;left:704.2px;top:99.5px;">Save As</span>
<span class="t" style="font-size:12px;color:#e8e8e8;transform:scaleX(0.886);transform-origin:0 50%;left:776.2px;top:56.4px;">Create Link</span>
<span class="t" style="font-size:12px;color:#e8e8e8;transform:scaleX(0.937);transform-origin:0 50%;left:778.1px;top:78.5px;">Show</span>
<span class="t" style="font-size:12px;color:#e8e8e8;transform:scaleX(0.871);transform-origin:0 50%;left:848.6px;top:91.2px;">Features</span>
<span class="t" style="font-size:12px;color:#e8e8e8;transform:scaleX(0.910);transform-origin:0 50%;left:904.9px;top:91.2px;">Tools</span>
<span class="t" style="font-size:12px;color:#e8e8e8;transform:scaleX(0.878);transform-origin:0 50%;left:955.5px;top:91.2px;">Behaviors</span>
<span class="t" style="font-size:12px;color:#e8e8e8;transform:scaleX(0.912);transform-origin:0 50%;left:1021.9px;top:91.2px;">Properties</span>
<span class="t" style="font-size:12px;color:#e8e8e8;transform:scaleX(0.917);transform-origin:0 50%;left:1091.2px;top:91.2px;">Wizards</span>
<span class="t" style="font-size:12px;color:#6c6c6c;transform:scaleX(0.856);transform-origin:0 50%;left:1168.1px;top:55.1px;">Snap</span>
<span class="t" style="font-size:12px;color:#6c6c6c;transform:scaleX(0.933);transform-origin:0 50%;left:1168.1px;top:77.6px;">Move</span>
<span class="t" style="font-size:12px;color:#e8e8e8;transform:scaleX(0.889);transform-origin:0 50%;left:1230.0px;top:56.0px;">Restore Windows</span>
<span class="t" style="font-size:12px;color:#e8e8e8;transform:scaleX(0.874);transform-origin:0 50%;left:1228.1px;top:78.3px;">Show</span>
<span class="t" style="font-size:16px;color:#ececec;left:9.4px;top:144.3px;">Component Graph</span>
<span class="t" style="font-size:15.5px;color:#8a8a8a;transform:scaleX(0.816);transform-origin:0 50%;left:60.0px;top:178.3px;">Search...</span>
<span class="t" style="font-size:12px;color:#e8e8e8;letter-spacing:-0.08px;left:44.2px;top:204.7px;">Default</span>
<span class="t" style="font-size:12px;color:#e8e8e8;letter-spacing:-0.03px;left:63.8px;top:224.9px;">Properties</span>
<span class="t" style="font-size:12px;color:#e8e8e8;transform:scaleX(0.941);transform-origin:0 50%;left:64.5px;top:244.7px;">Behaviors</span>
<span class="t" style="font-size:12px;color:#e8e8e8;transform:scaleX(0.890);transform-origin:0 50%;left:64.5px;top:264.7px;">Link_1</span>
<span class="t" style="font-size:12px;color:#e8e8e8;transform:scaleX(0.912);transform-origin:0 50%;left:64.5px;top:284.7px;">Link_2</span>
<span class="t" style="font-size:12px;color:#e8e8e8;transform:scaleX(0.948);transform-origin:0 50%;left:84.4px;top:304.7px;">Behaviors</span>
<span class="t" style="font-size:12px;color:#e8e8e8;transform:scaleX(0.912);transform-origin:0 50%;left:64.5px;top:324.7px;">Link_3</span>
<span class="t" style="font-size:12px;color:#e8e8e8;transform:scaleX(0.948);transform-origin:0 50%;left:84.4px;top:344.7px;">Behaviors</span>
<span class="t" style="font-size:15.5px;color:#8a8a8a;transform:scaleX(0.816);transform-origin:0 50%;left:60.0px;top:616.1px;">Search...</span>
<span class="t" style="font-size:12px;color:#e8e8e8;letter-spacing:-0.06px;left:44.2px;top:643.1px;">Root</span>
<span class="t" style="font-size:12px;color:#e8e8e8;transform:scaleX(0.932);transform-origin:0 50%;left:64.1px;top:663.1px;">Geometry_0__207</span>
<span class="t" style="font-size:12px;color:#e8e8e8;transform:scaleX(0.932);transform-origin:0 50%;left:64.1px;top:683.1px;">Geometry_0__243</span>
<span class="t" style="font-size:12px;color:#e8e8e8;transform:scaleX(0.932);transform-origin:0 50%;left:64.1px;top:703.1px;">Geometry_0__174</span>
<span class="t" style="font-size:12px;color:#e8e8e8;transform:scaleX(0.932);transform-origin:0 50%;left:64.1px;top:723.1px;">Geometry_0__526</span>
<span class="t" style="font-size:12px;color:#e8e8e8;transform:scaleX(0.932);transform-origin:0 50%;left:64.1px;top:743.1px;">Geometry_0__329</span>
<span class="t" style="font-size:12px;color:#e8e8e8;transform:scaleX(0.932);transform-origin:0 50%;left:64.1px;top:763.1px;">Geometry_0__415</span>
<span class="t" style="font-size:12px;color:#e8e8e8;transform:scaleX(0.932);transform-origin:0 50%;left:64.1px;top:783.1px;">Geometry_0__506</span>
<span class="t" style="font-size:12px;color:#e8e8e8;transform:scaleX(0.932);transform-origin:0 50%;left:64.1px;top:803.1px;">Geometry_0__402</span>
<span class="t" style="font-size:12px;color:#e8e8e8;transform:scaleX(0.932);transform-origin:0 50%;left:64.1px;top:823.1px;">Geometry_0__386</span>
<span class="t" style="font-size:12px;color:#e8e8e8;transform:scaleX(0.932);transform-origin:0 50%;left:64.1px;top:843.1px;">Geometry_0__483</span>
<span class="t" style="font-size:12px;color:#e8e8e8;transform:scaleX(0.932);transform-origin:0 50%;left:64.1px;top:863.1px;">Geometry_0__417</span>
<span class="t" style="font-size:12px;color:#e8e8e8;transform:scaleX(0.932);transform-origin:0 50%;left:64.1px;top:883.1px;">Geometry_0__359</span>
<span class="t" style="font-size:12px;color:#e8e8e8;transform:scaleX(0.932);transform-origin:0 50%;left:64.1px;top:903.1px;">Geometry_0__492</span>
<span class="t" style="font-size:12px;color:#e8e8e8;transform:scaleX(0.932);transform-origin:0 50%;left:64.1px;top:923.1px;">Geometry_0__444</span>
<span class="t" style="font-size:12px;color:#e8e8e8;transform:scaleX(0.932);transform-origin:0 50%;left:64.1px;top:943.1px;">Geometry_0__197</span>
<span class="t" style="font-size:12px;color:#e8e8e8;transform:scaleX(0.932);transform-origin:0 50%;left:64.1px;top:963.1px;">Geometry_0__406</span>
<span class="t" style="font-size:12px;color:#e8e8e8;transform:scaleX(0.932);transform-origin:0 50%;left:64.1px;top:983.1px;">Geometry_0__497</span>
<span class="t" style="font-size:12px;color:#e8e8e8;transform:scaleX(0.932);transform-origin:0 50%;left:64.1px;top:1003.1px;">Geometry_0__368</span>
<span class="t" style="font-size:12px;color:#e8e8e8;transform:scaleX(0.932);transform-origin:0 50%;left:64.1px;top:1023.1px;clip-path:inset(0 0 4.8px 0);">Geometry_0__445</span>
<span class="t" style="font-size:16px;color:#ececec;letter-spacing:-0.19px;left:1486.1px;top:144.1px;">Link Properties</span>
<span class="t" style="font-size:20px;color:#2a6788;transform:scaleX(0.783);transform-origin:0 50%;left:1483.1px;top:181.8px;">Link_3</span>
<span class="t" style="font-size:12px;color:#e8e8e8;letter-spacing:-0.05px;left:1483.1px;top:208.1px;">Coordinates</span>
<span class="t" style="font-size:12px;color:#e8e8e8;letter-spacing:0.07px;left:1644.0px;top:208.4px;">World</span>
<span class="t" style="font-size:12px;color:#e8e8e8;transform:scaleX(0.954);transform-origin:0 50%;left:1739.2px;top:208.4px;">Parent</span>
<span class="t" style="font-size:12px;color:#e8e8e8;letter-spacing:0.16px;left:1833.8px;top:208.4px;">Object</span>
<span class="t" style="font-size:12px;color:#ffffff;left:1190.7px;width:600px;text-align:center;top:239.0px;">X</span>
<span class="t" style="font-size:12px;color:#2a2a2a;transform:scaleX(0.885);transform-origin:0 50%;left:1500.8px;top:239.0px;">4000</span>
<span class="t" style="font-size:12px;color:#ffffff;left:1334.7px;width:600px;text-align:center;top:239.0px;">Y</span>
<span class="t" style="font-size:12px;color:#2a2a2a;transform:scaleX(0.892);transform-origin:0 50%;left:1644.7px;top:239.0px;">-2000</span>
<span class="t" style="font-size:12px;color:#ffffff;left:1478.5px;width:600px;text-align:center;top:239.0px;">Z</span>
<span class="t" style="font-size:12px;color:#2a2a2a;transform:scaleX(0.875);transform-origin:0 50%;left:1788.6px;top:239.0px;">-748.863</span>
<span class="t" style="font-size:11.5px;color:#ffffff;transform:scaleX(0.867);transform-origin:0 50%;left:1484.8px;top:264.4px;">Rx</span>
<span class="t" style="font-size:12px;color:#2a2a2a;transform:scaleX(0.856);transform-origin:0 50%;left:1500.8px;top:264.4px;">90</span>
<span class="t" style="font-size:11.5px;color:#ffffff;transform:scaleX(0.867);transform-origin:0 50%;left:1628.8px;top:264.4px;">Ry</span>
<span class="t" style="font-size:12px;color:#2a2a2a;left:1644.7px;top:264.4px;">0</span>
<span class="t" style="font-size:11.5px;color:#ffffff;transform:scaleX(0.867);transform-origin:0 50%;left:1772.6px;top:264.4px;">Rz</span>
<span class="t" style="font-size:12px;color:#2a2a2a;left:1788.6px;top:264.4px;">0</span>
<span class="t" style="font-size:12px;color:#e8e8e8;letter-spacing:-0.04px;left:1483.1px;top:304.3px;">Name</span>
<span class="t" style="font-size:12px;color:#2a2a2a;transform:scaleX(0.901);transform-origin:0 50%;left:1618.5px;top:304.5px;">Link_3</span>
<span class="t" style="font-size:12px;color:#e8e8e8;letter-spacing:0.01px;left:1483.1px;top:329.0px;">Offset</span>
<span class="t" style="font-size:12px;color:#e8e8e8;letter-spacing:-0.17px;left:1483.1px;top:354.4px;">JointType</span>
<span class="t" style="font-size:11.5px;color:#2a2a2a;transform:scaleX(0.900);transform-origin:0 50%;left:1620.4px;top:354.6px;">Translational</span>
<span class="t" style="font-size:12px;color:#e8e8e8;transform:scaleX(0.926);transform-origin:0 50%;left:1483.1px;top:380.0px;">Axis</span>
<span class="t" style="font-size:11.5px;color:#2a2a2a;letter-spacing:-0.07px;left:1620.4px;top:380.2px;">+X</span>
<span class="t" style="font-size:12.5px;color:#16168a;font-weight:bold;transform:scaleX(0.795);transform-origin:0 50%;left:1623.4px;top:329.2px;">Ty</span>
<span class="t" style="font-size:12.5px;color:#b030b0;left:1634.2px;top:329.2px;">(</span>
<span class="t" style="font-size:12.5px;color:#7a7a7a;left:1637.6px;top:329.2px;">-748.863295</span>
<span class="t" style="font-size:12.5px;color:#b030b0;left:1707.4px;top:329.2px;">)</span>
<span class="t" style="font-size:20px;color:#2a6788;transform:scaleX(0.850);transform-origin:0 50%;left:1483.1px;top:416.8px;">Joint properties</span>
<span class="t" style="font-size:12px;color:#e8e8e8;letter-spacing:-0.04px;left:1483.1px;top:447.5px;">Name</span>
<span class="t" style="font-size:12px;color:#2a2a2a;transform:scaleX(0.857);transform-origin:0 50%;left:1618.5px;top:447.7px;">J2</span>
<span class="t" style="font-size:12px;color:#e8e8e8;letter-spacing:0.12px;left:1483.1px;top:471.5px;">Controller</span>
<span class="t" style="font-size:11px;color:#4a4a4a;letter-spacing:0.14px;left:1620.4px;top:471.7px;">Null</span>
<span class="t" style="font-size:12px;color:#e8e8e8;letter-spacing:-0.03px;left:1483.1px;top:494.8px;">Initial Value</span>
<span class="t" style="font-size:12.5px;color:#2a2a2a;left:1618.5px;top:494.9px;">0</span>
<span class="t" style="font-size:12px;color:#e8e8e8;transform:scaleX(0.857);transform-origin:0 50%;left:1483.1px;top:517.7px;">J2</span>
<span class="t" style="font-size:12.5px;color:#2a2a2a;left:1618.5px;top:517.9px;">0</span>
<span class="t" style="font-size:12px;color:#e8e8e8;transform:scaleX(0.953);transform-origin:0 50%;left:1483.1px;top:542.4px;">Value Expression</span>
<span class="t" style="font-size:12px;color:#2a2a2a;transform:scaleX(0.887);transform-origin:0 50%;left:1623.4px;top:542.6px;">VALUE</span>
<span class="t" style="font-size:12px;color:#e8e8e8;letter-spacing:0.21px;left:1483.1px;top:574.4px;">Min Limit</span>
<span class="t" style="font-size:12px;color:#4a4a4a;letter-spacing:-0.14px;left:1623.4px;top:574.6px;">-2000</span>
<span class="t" style="font-size:12px;color:#e8e8e8;left:1483.1px;top:600.6px;">Max Limit</span>
<span class="t" style="font-size:12px;color:#4a4a4a;transform:scaleX(0.949);transform-origin:0 50%;left:1623.4px;top:600.8px;">180.0</span>
<span class="t" style="font-size:15.5px;color:#ececec;letter-spacing:0.62px;left:333.0px;top:823.6px;">Output</span>
<span class="t" style="font-size:15px;color:#3f9a2c;transform:scaleX(0.946);transform-origin:0 50%;left:327.4px;top:850.2px;">Operation not found: (class rMatrix)int</span>
<span class="t" style="font-size:15.5px;color:#444444;transform:scaleX(0.933);transform-origin:0 50%;left:88.1px;top:1050.9px;">Type here to search</span>
<span class="t" style="font-size:13.5px;color:#18a8ee;font-weight:bold;left:314.1px;width:600px;text-align:center;top:1050.1px;">S</span>
<span class="t" style="font-size:14px;color:#f0f0f0;transform:scaleX(0.947);transform-origin:0 50%;left:1651.9px;top:1050.1px;">20°C</span>
<span class="t" style="font-size:12.5px;color:#f0f0f0;letter-spacing:0.35px;left:1690.9px;top:1051.1px;">Pilvistä</span>
<span class="t" style="font-size:11px;color:#f0f0f0;transform:scaleX(0.944);transform-origin:0 50%;left:1820.6px;top:1050.3px;">ENG</span>
<span class="t" style="font-size:11.5px;color:#f0f0f0;letter-spacing:0.13px;left:1860.8px;top:1040.8px;">9:34 AM</span>
<span class="t" style="font-size:11.5px;color:#f0f0f0;letter-spacing:0.06px;left:1857.0px;top:1058.4px;">7/18/2022</span>
</div>
</body></html>
